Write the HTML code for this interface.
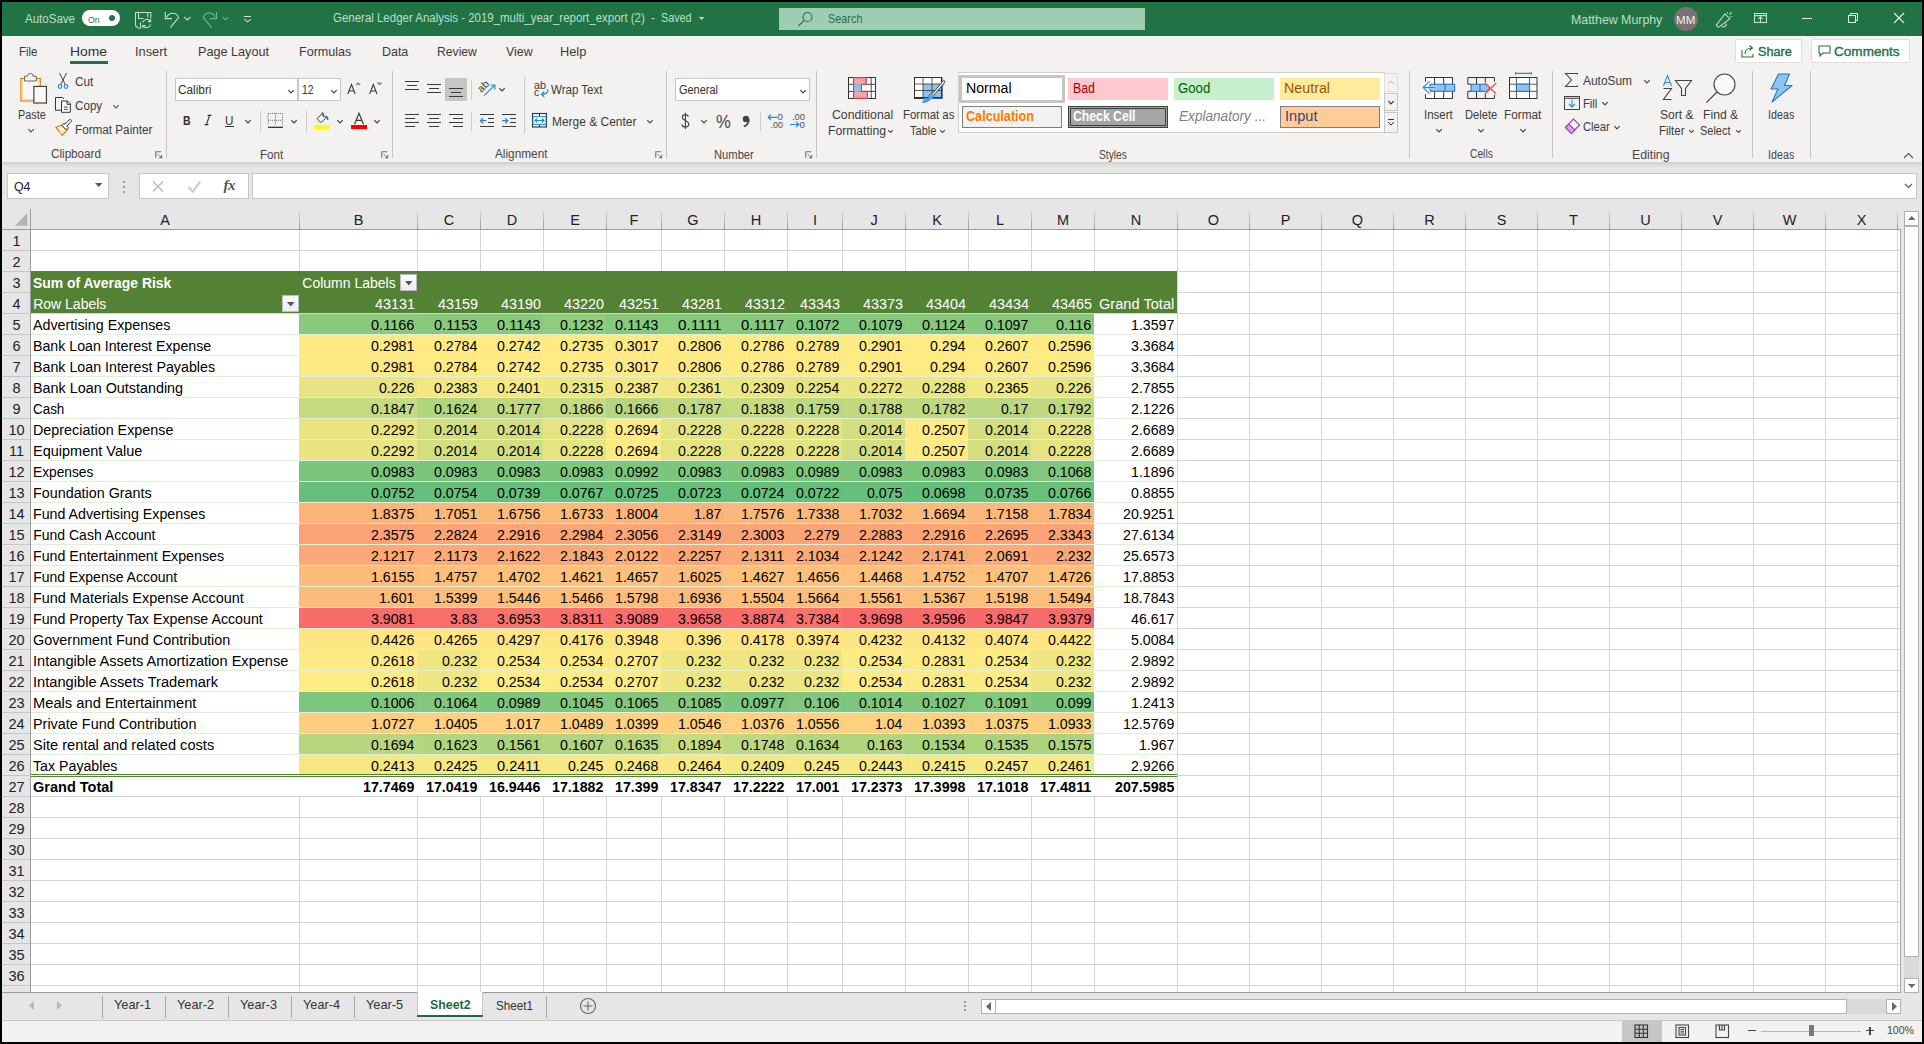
<!DOCTYPE html>
<html><head><meta charset="utf-8"><style>
html,body{margin:0;padding:0;}
body{width:1924px;height:1044px;overflow:hidden;background:#000;position:relative;font-family:"Liberation Sans",sans-serif;}
.r{position:absolute;}
.t{position:absolute;white-space:pre;line-height:1;transform-origin:0 0;font-family:"Liberation Sans",sans-serif;}
svg.r{overflow:visible;}
</style></head><body>
<div class="r" style="left:2px;top:2px;width:1920px;height:34px;background:#217346;"></div><div class="t" style="left:25.00px;top:13.49px;font-size:12.5px;color:#bddfc8;transform:scaleX(0.9224);">AutoSave</div><div class="r" style="left:82px;top:10px;width:38px;height:16px;border-radius:8px;background:#fff"></div><div class="t" style="left:88.00px;top:14.67px;font-size:9.6px;color:#2a7550;transform:scaleX(0.9136);">On</div><div class="r" style="left:108.7px;top:14.6px;width:6.6px;height:6.6px;border-radius:50%;background:#217346"></div><svg class="r" style="left:0;top:0" width="1924" height="36" viewBox="0 0 1924 36" fill="none" stroke-width="1.05">
<g stroke="#c5e0cf">
<path d="M140.5 28V22.5M135.5 12.5H150.8V18.3M135.5 12.5V25.7L138.3 28.2H140.5M138.5 13V18.5H143.5M147.7 13V17.3"/>
<path d="M142.6 22.6A4.3 4.3 0 0 1 150.3 21.2M150.6 18.8V21.6H147.9M150.6 24.3A4.3 4.3 0 0 1 142.9 25.9M142.7 28.3V25.6H145.4"/>
<path d="M165.3 12V18.6H172M166.8 17.4A6.2 6.2 0 0 1 178.6 17.6L170.3 27.6"/>
<path d="M184 16.8L187.3 19.9L190.5 16.8"/>
<path d="M243.9 16.4H251M244.2 19.2L247.6 21.9L251 19.2"/>
<path d="M1716.3 25.4L1724.9 13.8L1729.9 18.7L1718.5 27.3Z"/><path d="M1721.8 25.8A1.9 1.9 0 0 0 1725.6 23.2"/><path d="M1727.4 12.2V13.7M1729.4 14.5L1731.6 12.4M1730.4 16.5H1731.8"/>
<path d="M1754.5 13.5H1766.5V22.5H1754.5ZM1754.5 15.6H1766.5M1760.5 22.5V17M1758.3 19.2L1760.5 17L1762.7 19.2"/>
</g>
<g stroke="#80b597">
<path d="M216.5 12V18.6H209.8M215.2 17.4A6.2 6.2 0 0 0 203.3 17.6L211.7 27.6"/>
<path d="M222.6 17.2L225.4 19.9L228.3 17.2"/>
</g></svg><div class="r" style="left:1802px;top:18px;width:10px;height:1px;background:#e3efe8;"></div><svg class="r" style="left:1847px;top:12px" width="12" height="12" viewBox="0 0 12 12" fill="none" stroke="#e3efe8" stroke-width="1"><rect x="1.5" y="3.5" width="7" height="7"/><path d="M3.5 3.5v-2h7v7h-2"/></svg><svg class="r" style="left:1893px;top:12px" width="12" height="12" viewBox="0 0 12 12" fill="none" stroke="#e3efe8" stroke-width="1.1"><path d="M1 1l10 10M11 1L1 11"/></svg><div class="t" style="left:332.50px;top:12.09px;font-size:12.5px;color:#bddfc8;transform:scaleX(0.9176);">General Ledger Analysis - 2019_multi_year_report_export (2)</div><div class="t" style="left:650.60px;top:12.09px;font-size:12.5px;color:#bddfc8;transform:scaleX(0.9608);">-</div><div class="t" style="left:661.00px;top:12.09px;font-size:12.5px;color:#bddfc8;transform:scaleX(0.8605);">Saved</div><svg class="r" style="left:698.8px;top:17px" width="5.4" height="3" viewBox="0 0 5.4 3"><path d="M0 0h5.4L2.7 3z" fill="#bddfc8"/></svg><div class="r" style="left:779px;top:8px;width:366px;height:22px;background:#9fcdb3;"></div><svg class="r" style="left:797px;top:11px" width="17" height="16" viewBox="0 0 17 16" fill="none" stroke="#2e6f48" stroke-width="1.1"><circle cx="10.5" cy="6" r="4.5"/><path d="M7.3 9.2L1.5 15"/></svg><div class="t" style="left:828.00px;top:13.29px;font-size:12.5px;color:#2e6f48;transform:scaleX(0.8710);">Search</div><div class="t" style="left:1571.40px;top:13.79px;font-size:12.5px;color:#bddfc8;transform:scaleX(0.9881);">Matthew Murphy</div><div class="r" style="left:1674px;top:7px;width:24px;height:24px;border-radius:50%;background:#7a7172"></div><div class="t" style="left:1676.40px;top:14.57px;font-size:11px;color:#f2eef0;transform:scaleX(1.0585);">MM</div><div class="r" style="left:2px;top:36px;width:1920px;height:126px;background:#f3f2f1;"></div><div class="t" style="left:19.00px;top:44.86px;font-size:13px;color:#3b3a39;transform:scaleX(0.8784);">File</div><div class="t" style="left:70.00px;top:44.86px;font-size:13px;color:#323130;transform:scaleX(1.0669);">Home</div><div class="t" style="left:135.00px;top:44.86px;font-size:13px;color:#3b3a39;transform:scaleX(0.9842);">Insert</div><div class="t" style="left:198.00px;top:44.86px;font-size:13px;color:#3b3a39;transform:scaleX(0.9725);">Page Layout</div><div class="t" style="left:299.20px;top:44.86px;font-size:13px;color:#3b3a39;transform:scaleX(0.9672);">Formulas</div><div class="t" style="left:381.50px;top:44.86px;font-size:13px;color:#3b3a39;transform:scaleX(0.9577);">Data</div><div class="t" style="left:437.30px;top:44.86px;font-size:13px;color:#3b3a39;transform:scaleX(0.9361);">Review</div><div class="t" style="left:505.50px;top:44.86px;font-size:13px;color:#3b3a39;transform:scaleX(0.9519);">View</div><div class="t" style="left:560.40px;top:44.86px;font-size:13px;color:#3b3a39;transform:scaleX(0.9836);">Help</div><div class="r" style="left:70px;top:61px;width:38px;height:3px;background:#217346;"></div><div class="r" style="left:1734.5px;top:39px;width:65px;height:22px;background:#fff;border:1px solid #e1dfdd;border-radius:2px"></div><div class="r" style="left:1810.5px;top:39px;width:97px;height:22px;background:#fff;border:1px solid #e1dfdd;border-radius:2px"></div><svg class="r" style="left:1741px;top:44px" width="14" height="14" viewBox="0 0 14 14" fill="none" stroke="#217346" stroke-width="1.1"><path d="M1 6v7h11V10"/><path d="M4 10c0-4 3-6 7-6M8.5 1.5L11.5 4 8.5 6.5"/></svg><div class="t" style="left:1758.20px;top:45.43px;font-size:13.5px;color:#217346;transform:scaleX(0.9382);-webkit-text-stroke:0.4px #217346;">Share</div><svg class="r" style="left:1818px;top:45px" width="13" height="12" viewBox="0 0 13 12" fill="none" stroke="#217346" stroke-width="1.1"><path d="M1 1h11v7H5l-3 3V8H1z"/></svg><div class="t" style="left:1834.40px;top:45.43px;font-size:13.5px;color:#217346;transform:scaleX(1.0051);-webkit-text-stroke:0.4px #217346;">Comments</div><svg class="r" style="left:0;top:0" width="180" height="170" viewBox="0 0 180 170" fill="none">
<rect x="20.9" y="78.5" width="19.4" height="22.5" fill="#fdf3dc" stroke="#e8750c" stroke-width="1.1"/>
<rect x="22.3" y="80" width="16.6" height="19.6" fill="#f7f7f7" stroke="#fbd77e" stroke-width="1"/>
<path d="M24.5 81V76.2H27.6A2.8 2.8 0 0 1 33.2 76.2H36.3V81Z" fill="#f2f2f2" stroke="#666" stroke-width="1"/>
<rect x="33.9" y="86.4" width="12.5" height="16.6" fill="#fafafa" stroke="#333" stroke-width="1.1"/>
</svg><div class="t" style="left:17.50px;top:109.19px;font-size:12.5px;color:#3b3a39;transform:scaleX(0.8666);">Paste</div><svg class="r" style="left:26.5px;top:128px" width="8" height="5" viewBox="0 0 8 5" fill="none" stroke="#555" stroke-width="1.15"><path d="M1.3 1.2l2.7 2.7 2.7-2.7"/></svg><svg class="r" style="left:57px;top:72px" width="12" height="18" viewBox="0 0 12 18" fill="none">
<path d="M2.5 1l6 12M9.5 1l-6 12" stroke="#444" stroke-width="1"/>
<circle cx="3" cy="14.5" r="1.8" stroke="#2f8ad8" stroke-width="1.2"/><circle cx="9" cy="14.5" r="1.8" stroke="#2f8ad8" stroke-width="1.2"/></svg><div class="t" style="left:74.60px;top:76.19px;font-size:12.5px;color:#3b3a39;transform:scaleX(0.9408);">Cut</div><svg class="r" style="left:0;top:0" width="180" height="170" viewBox="0 0 180 170" fill="none" stroke="#333" stroke-width="1">
<path d="M61.5 110.2H55.5V97.5H62.5L64 99"/>
<path d="M61.5 101H67.5L70.3 103.8V112.3H61.5Z" fill="#fff"/><path d="M67 101V104.3H70.3"/><path d="M63.8 107H67.8M63.8 109.3H67.8" stroke-width="0.9"/>
</svg><div class="t" style="left:74.60px;top:99.99px;font-size:12.5px;color:#3b3a39;transform:scaleX(0.9321);">Copy</div><svg class="r" style="left:111.5px;top:104px" width="8" height="5" viewBox="0 0 8 5" fill="none" stroke="#555" stroke-width="1.15"><path d="M1.3 1.2l2.7 2.7 2.7-2.7"/></svg><svg class="r" style="left:0;top:0" width="180" height="170" viewBox="0 0 180 170" fill="none">
<path d="M55.8 127.2L61.5 125.2L66.8 130.5L62.2 135.3Z" fill="#fdf6e8" stroke="#e8750c" stroke-width="1.2" stroke-linejoin="round"/>
<path d="M58.5 132.3L63.5 130.8L62 134.5Z" fill="#fbd77e"/>
<path d="M61.8 125.3L64.2 123.3L68.5 127.6L66.6 130.1Z" fill="#fff" stroke="#333" stroke-width="1"/>
<path d="M64.8 124.4L69.3 119.8A1.2 1.2 0 0 1 71 121.5L66.8 126.2" fill="#fff" stroke="#333" stroke-width="1"/>
</svg><div class="t" style="left:74.60px;top:123.89px;font-size:12.5px;color:#3b3a39;transform:scaleX(0.9363);">Format Painter</div><div class="t" style="left:50.50px;top:148.12px;font-size:12px;color:#484644;transform:scaleX(0.9734);">Clipboard</div><svg class="r" style="left:155px;top:151px" width="8" height="8" viewBox="0 0 8 8"><path d="M0.8 6.8V0.8H6" fill="none" stroke="#707070" stroke-width="1.1"/><path d="M2.8 3.2L5 5.4" stroke="#707070" stroke-width="1"/><path d="M3.6 7.2H7.2V3.6Z" fill="#707070"/></svg><div class="r" style="left:166px;top:71px;width:1px;height:87px;background:#c8c6c4;"></div><div class="r" style="left:175px;top:78px;width:121px;height:21px;background:#fff;border:1px solid #c8c6c4"></div><div class="r" style="left:298px;top:78px;width:41px;height:21px;background:#fff;border:1px solid #c8c6c4"></div><div class="t" style="left:178.40px;top:83.99px;font-size:12.5px;color:#323130;transform:scaleX(0.9456);">Calibri</div><svg class="r" style="left:287px;top:89px" width="8" height="5" viewBox="0 0 8 5" fill="none" stroke="#444" stroke-width="1.15"><path d="M1.3 1.2l2.7 2.7 2.7-2.7"/></svg><div class="t" style="left:301.50px;top:83.99px;font-size:12.5px;color:#323130;transform:scaleX(0.8271);">12</div><svg class="r" style="left:330px;top:89px" width="8" height="5" viewBox="0 0 8 5" fill="none" stroke="#444" stroke-width="1.15"><path d="M1.3 1.2l2.7 2.7 2.7-2.7"/></svg><svg class="r" style="left:0;top:0" width="400" height="170" viewBox="0 0 400 170" fill="none">
<path d="M347.8 94L351.5 84.6L355.2 94M349 91H354" stroke="#3a3a3a" stroke-width="1.1"/><path d="M356.2 85L358.1 83L360 85" stroke="#1e88d8" stroke-width="1.1"/>
<path d="M369.6 94L373.3 84.6L377 94M370.8 91H375.8" stroke="#3a3a3a" stroke-width="1.1"/><path d="M377.5 82.5L379.5 84.5L381.5 82.5" stroke="#1e88d8" stroke-width="1.1"/>
<path d="M207.6 115.4H211.4M204.6 124.6H208.4M209.6 115.4L206.4 124.6" stroke="#333" stroke-width="1.1"/>
<path d="M268.2 113.5H282.5V125.5M268.2 113.5V125.5M275.5 113.5V125.5M268.2 120.3H282.5" stroke="#555" stroke-width="0.9" stroke-dasharray="0.9 1.1"/>
<path d="M268 127.3H283" stroke="#222" stroke-width="1.2"/>
<path d="M317 118.7L322 113.7L326 117.7L321 122.7Z" stroke="#3a3a3a" stroke-width="1"/><path d="M322 113.7C321.5 112.5 323.2 112 323.2 113.3V117" stroke="#3a3a3a" stroke-width="1"/>
<path d="M325.2 116.3C326.8 116.5 327.8 117.6 327.7 120" stroke="#1e6fc0" stroke-width="1.5"/>
<path d="M354.6 124.2L359 113.2L363.5 124.2M356.2 120.3H362" stroke="#3a3a3a" stroke-width="1.15"/>
</svg><div class="t" style="left:182.60px;top:114.39px;font-size:13.2px;color:#333;font-weight:bold;transform:scaleX(0.7972);">B</div><div class="t" style="left:225.30px;top:114.79px;font-size:12.5px;color:#333;transform:scaleX(0.9305);">U</div><div class="r" style="left:225px;top:126px;width:9px;height:1.1px;background:#333;"></div><svg class="r" style="left:243.5px;top:118.8px" width="8" height="5" viewBox="0 0 8 5" fill="none" stroke="#3a3a3a" stroke-width="1.15"><path d="M1.3 1.2l2.7 2.7 2.7-2.7"/></svg><div class="r" style="left:260px;top:111px;width:1px;height:21px;background:#d0cecc;"></div><svg class="r" style="left:289.5px;top:118.8px" width="8" height="5" viewBox="0 0 8 5" fill="none" stroke="#3a3a3a" stroke-width="1.15"><path d="M1.3 1.2l2.7 2.7 2.7-2.7"/></svg><div class="r" style="left:306px;top:111px;width:1px;height:21px;background:#d0cecc;"></div><div class="r" style="left:314px;top:125.3px;width:15.7px;height:3.6px;background:#ffff00;"></div><svg class="r" style="left:335.5px;top:118.8px" width="8" height="5" viewBox="0 0 8 5" fill="none" stroke="#3a3a3a" stroke-width="1.15"><path d="M1.3 1.2l2.7 2.7 2.7-2.7"/></svg><div class="r" style="left:351px;top:125.3px;width:16px;height:3.6px;background:#ff0000;"></div><svg class="r" style="left:372.5px;top:118.8px" width="8" height="5" viewBox="0 0 8 5" fill="none" stroke="#3a3a3a" stroke-width="1.15"><path d="M1.3 1.2l2.7 2.7 2.7-2.7"/></svg><div class="t" style="left:259.60px;top:148.52px;font-size:12px;color:#484644;transform:scaleX(0.9662);">Font</div><svg class="r" style="left:381px;top:151px" width="8" height="8" viewBox="0 0 8 8"><path d="M0.8 6.8V0.8H6" fill="none" stroke="#707070" stroke-width="1.1"/><path d="M2.8 3.2L5 5.4" stroke="#707070" stroke-width="1"/><path d="M3.6 7.2H7.2V3.6Z" fill="#707070"/></svg><div class="r" style="left:392px;top:71px;width:1px;height:87px;background:#c8c6c4;"></div><div class="r" style="left:405px;top:80.8px;width:14px;height:1.25px;background:#3a3a3a;"></div><div class="r" style="left:407.2px;top:84.9px;width:9.6px;height:1.25px;background:#3a3a3a;"></div><div class="r" style="left:405px;top:88.9px;width:14px;height:1.25px;background:#3a3a3a;"></div><div class="r" style="left:427px;top:83.8px;width:14px;height:1.25px;background:#3a3a3a;"></div><div class="r" style="left:429.2px;top:87.8px;width:9.8px;height:1.25px;background:#3a3a3a;"></div><div class="r" style="left:427px;top:91.8px;width:14px;height:1.25px;background:#3a3a3a;"></div><div class="r" style="left:445px;top:78px;width:22px;height:23px;background:#c8c6c4;"></div><div class="r" style="left:449px;top:87.8px;width:14px;height:1.25px;background:#3a3a3a;"></div><div class="r" style="left:451.2px;top:91.8px;width:9.8px;height:1.25px;background:#3a3a3a;"></div><div class="r" style="left:449px;top:95.8px;width:14px;height:1.25px;background:#3a3a3a;"></div><div class="r" style="left:471px;top:79.5px;width:1px;height:20.5px;background:#d0cecc;"></div><svg class="r" style="left:0;top:0" width="700" height="170" viewBox="0 0 700 170" fill="none">
<text x="0" y="0" font-size="10.5" font-family="Liberation Sans" fill="#3a3a3a" transform="translate(481.5 93) rotate(-45)">ab</text>
<path d="M484.2 95.6L494.6 85.2M490.2 85H494.8V89.6" stroke="#1e88d8" stroke-width="1.15"/>
<path d="M480.5 120.7H486.3M483 118.2L480.5 120.7L483 123.2" stroke="#1e88d8" stroke-width="1.3"/>
<path d="M502 120.7H507.8M505.3 118.2L507.8 120.7L505.3 123.2" stroke="#1e88d8" stroke-width="1.3"/>
</svg><svg class="r" style="left:498.3px;top:86.5px" width="8" height="5" viewBox="0 0 8 5" fill="none" stroke="#3a3a3a" stroke-width="1.15"><path d="M1.3 1.2l2.7 2.7 2.7-2.7"/></svg><div class="r" style="left:524px;top:76.5px;width:1px;height:57.5px;background:#d0cecc;"></div><div class="r" style="left:405px;top:113.8px;width:14px;height:1.25px;background:#3a3a3a;"></div><div class="r" style="left:405px;top:117.83px;width:10px;height:1.25px;background:#3a3a3a;"></div><div class="r" style="left:405px;top:121.86px;width:14px;height:1.25px;background:#3a3a3a;"></div><div class="r" style="left:405px;top:125.89px;width:10px;height:1.25px;background:#3a3a3a;"></div><div class="r" style="left:427px;top:113.8px;width:14px;height:1.25px;background:#3a3a3a;"></div><div class="r" style="left:429.2px;top:117.83px;width:9.8px;height:1.25px;background:#3a3a3a;"></div><div class="r" style="left:427px;top:121.86px;width:14px;height:1.25px;background:#3a3a3a;"></div><div class="r" style="left:429.2px;top:125.89px;width:9.8px;height:1.25px;background:#3a3a3a;"></div><div class="r" style="left:449px;top:113.8px;width:14px;height:1.25px;background:#3a3a3a;"></div><div class="r" style="left:453px;top:117.83px;width:10px;height:1.25px;background:#3a3a3a;"></div><div class="r" style="left:449px;top:121.86px;width:14px;height:1.25px;background:#3a3a3a;"></div><div class="r" style="left:453px;top:125.89px;width:10px;height:1.25px;background:#3a3a3a;"></div><div class="r" style="left:471px;top:111.5px;width:1px;height:19.5px;background:#d0cecc;"></div><div class="r" style="left:480.2px;top:113.8px;width:13.8px;height:1.25px;background:#3a3a3a;"></div><div class="r" style="left:488.3px;top:117.8px;width:5.7px;height:1.25px;background:#3a3a3a;"></div><div class="r" style="left:488.3px;top:121.9px;width:5.7px;height:1.25px;background:#3a3a3a;"></div><div class="r" style="left:480.2px;top:125.9px;width:13.8px;height:1.25px;background:#3a3a3a;"></div><div class="r" style="left:502px;top:113.8px;width:14px;height:1.25px;background:#3a3a3a;"></div><div class="r" style="left:510.1px;top:117.8px;width:5.9px;height:1.25px;background:#3a3a3a;"></div><div class="r" style="left:510.1px;top:121.9px;width:5.9px;height:1.25px;background:#3a3a3a;"></div><div class="r" style="left:502px;top:125.9px;width:14px;height:1.25px;background:#3a3a3a;"></div><svg class="r" style="left:0;top:0" width="700" height="170" viewBox="0 0 700 170" fill="none">
<text x="534" y="88.6" font-size="10.5" font-family="Liberation Sans" fill="#3a3a3a" textLength="12" lengthAdjust="spacingAndGlyphs">ab</text>
<text x="534" y="95.8" font-size="10.5" font-family="Liberation Sans" fill="#3a3a3a">c</text>
<path d="M547.6 89.2C548.8 92 546.5 94.2 541.8 94.2M544.2 91.7L541.5 94.2L544.2 96.7" stroke="#1e88d8" stroke-width="1.2"/>
<rect x="532.5" y="113.5" width="14" height="13.5" stroke="#333" stroke-width="1.1"/>
<path d="M539.5 113.5V116.5M539.5 124.5V127" stroke="#333" stroke-width="1"/>
<rect x="533" y="116.6" width="13" height="7.8" fill="#fff" stroke="#1e88d8" stroke-width="1"/>
<path d="M535 120.5H544M537.2 118.3L535 120.5L537.2 122.7M541.8 118.3L544 120.5L541.8 122.7" stroke="#1e88d8" stroke-width="1.15"/>
</svg><div class="t" style="left:551.30px;top:83.69px;font-size:12.5px;color:#3b3a39;transform:scaleX(0.9227);">Wrap Text</div><div class="t" style="left:551.60px;top:115.69px;font-size:12.5px;color:#3b3a39;transform:scaleX(0.9565);">Merge &amp; Center</div><svg class="r" style="left:645.5px;top:119px" width="8" height="5" viewBox="0 0 8 5" fill="none" stroke="#444" stroke-width="1.15"><path d="M1.3 1.2l2.7 2.7 2.7-2.7"/></svg><div class="t" style="left:495.00px;top:148.12px;font-size:12px;color:#484644;transform:scaleX(0.9838);">Alignment</div><svg class="r" style="left:655px;top:151px" width="8" height="8" viewBox="0 0 8 8"><path d="M0.8 6.8V0.8H6" fill="none" stroke="#707070" stroke-width="1.1"/><path d="M2.8 3.2L5 5.4" stroke="#707070" stroke-width="1"/><path d="M3.6 7.2H7.2V3.6Z" fill="#707070"/></svg><div class="r" style="left:666px;top:71px;width:1px;height:87px;background:#c8c6c4;"></div><div class="r" style="left:675px;top:78px;width:133px;height:21px;background:#fff;border:1px solid #c8c6c4"></div><div class="t" style="left:678.70px;top:84.19px;font-size:12.5px;color:#323130;transform:scaleX(0.8770);">General</div><svg class="r" style="left:798.5px;top:89px" width="8" height="5" viewBox="0 0 8 5" fill="none" stroke="#444" stroke-width="1.15"><path d="M1.3 1.2l2.7 2.7 2.7-2.7"/></svg><svg class="r" style="left:0;top:0" width="700" height="140" viewBox="0 0 700 140" fill="none" stroke="#404040" stroke-width="1.1"><path d="M688.4 116.8C688 115.3 686.8 114.6 685.4 114.6C683.5 114.6 682.3 115.8 682.3 117.4C682.3 120.8 688.8 120.2 688.8 124.1C688.8 125.9 687.4 127.1 685.4 127.1C683.4 127.1 682.2 126 681.9 124.3M685.4 112.7V129"/></svg><svg class="r" style="left:699.5px;top:119px" width="8" height="5" viewBox="0 0 8 5" fill="none" stroke="#444" stroke-width="1.15"><path d="M1.3 1.2l2.7 2.7 2.7-2.7"/></svg><div class="t" style="left:715.60px;top:113.05px;font-size:18.5px;color:#444;transform:scaleX(0.8997);">%</div><svg class="r" style="left:741px;top:113px" width="10" height="16" viewBox="0 0 10 16"><circle cx="5" cy="6" r="3.2" fill="#444"/><path d="M7.8 6.5c0 4-2 6-5 7" stroke="#444" stroke-width="1.8" fill="none"/></svg><div class="r" style="left:760px;top:112px;width:1px;height:19px;background:#d0cecc;"></div><svg class="r" style="left:0;top:0" width="820" height="170" viewBox="0 0 820 170" fill="none">
<path d="M777.2 117.3H768.3M771 114.6L768.3 117.3L771 120" stroke="#1e88d8" stroke-width="1.2"/>
<text x="777.6" y="119.8" font-size="9.6" font-family="Liberation Sans" fill="#505050" textLength="5.4" lengthAdjust="spacingAndGlyphs">0</text>
<text x="770.5" y="127.9" font-size="9.6" font-family="Liberation Sans" fill="#505050" textLength="12.6" lengthAdjust="spacingAndGlyphs">.00</text>
<text x="792" y="119.8" font-size="9.6" font-family="Liberation Sans" fill="#505050" textLength="13" lengthAdjust="spacingAndGlyphs">.00</text>
<path d="M790 124.5H798.8M796.1 121.8L798.8 124.5L796.1 127.2" stroke="#1e88d8" stroke-width="1.2"/>
<text x="799.6" y="127.9" font-size="9.6" font-family="Liberation Sans" fill="#505050" textLength="5.4" lengthAdjust="spacingAndGlyphs">0</text>
</svg><div class="t" style="left:713.80px;top:148.52px;font-size:12px;color:#484644;transform:scaleX(0.9325);">Number</div><svg class="r" style="left:805px;top:151px" width="8" height="8" viewBox="0 0 8 8"><path d="M0.8 6.8V0.8H6" fill="none" stroke="#707070" stroke-width="1.1"/><path d="M2.8 3.2L5 5.4" stroke="#707070" stroke-width="1"/><path d="M3.6 7.2H7.2V3.6Z" fill="#707070"/></svg><div class="r" style="left:816px;top:71px;width:1px;height:87px;background:#c8c6c4;"></div><svg class="r" style="left:0;top:0" width="960" height="170" viewBox="0 0 960 170" fill="none">
<rect x="848.5" y="77.5" width="27" height="21" fill="#fff" stroke="#333" stroke-width="1"/>
<path d="M853.6 77.5V98.5M871.2 77.5V98.5M866 77.5V84.3M866 91.4V98.5M848.5 84.3H875.5M848.5 91.4H875.5" stroke="#333" stroke-width="0.9"/>
<rect x="853.6" y="77.5" width="12.4" height="6.8" fill="#f4a3ab"/><rect x="853.6" y="84.3" width="7.8" height="7.1" fill="#8fc3ee"/><rect x="853.6" y="91.4" width="13.9" height="7.1" fill="#f4a3ab"/>
<path d="M853.6 77.8H866V84.3H861.4V91.4H867.5V98.2H853.6Z" stroke="#e03c3c" stroke-width="1.1"/>
<rect x="914.5" y="77.5" width="27.5" height="21" fill="#fff" stroke="#333" stroke-width="1"/>
<rect x="923.7" y="84.3" width="18.3" height="14.2" fill="#8fc3ee"/>
<path d="M923.7 77.5V98.5M933 77.5V98.5M914.5 84.3H942M914.5 91.4H942" stroke="#333" stroke-width="0.9"/>
<path d="M923.7 84.3H942V98.5H923.7Z" stroke="#1e6fc0" stroke-width="1"/>
<path d="M930.2 95.5L941.8 83.2C942.8 82.2 944.5 83.5 943.6 84.6L932.3 97.2Z" fill="#fff" stroke="#555" stroke-width="0.9"/>
<path d="M921.5 103C923.5 101.5 924 97 927.5 95.8L931.2 97.6C930.8 101.5 926 103.5 921.5 103Z" fill="#4a9fe6"/>
</svg><div class="t" style="left:831.60px;top:109.09px;font-size:12.5px;color:#3b3a39;transform:scaleX(0.9785);">Conditional</div><div class="t" style="left:827.70px;top:124.69px;font-size:12.5px;color:#3b3a39;transform:scaleX(0.9708);">Formatting</div><svg class="r" style="left:887px;top:128.5px" width="7" height="4.5" viewBox="0 0 8 5" fill="none" stroke="#444" stroke-width="1.15"><path d="M1.3 1.2l2.7 2.7 2.7-2.7"/></svg><svg class="r" style="left:913px;top:76px" width="33" height="25" viewBox="0 0 33 25">
<rect x="1.5" y="1.5" width="27" height="20" fill="#fff" stroke="#333" stroke-width="1"/>
<rect x="10" y="8" width="18" height="13" fill="#8fc3ee"/>
<path d="M10 1.5v20M19 1.5v20M1.5 8h27M1.5 14.5h27" stroke="#333" stroke-width="0.8"/>
<path d="M16 21c0-3 2-4 4-4l10-12c1-1 2.5 0 2 1L21 19c0 2-2 4-5 4z" fill="#fff" stroke="#444" stroke-width="1"/><path d="M15 23c1-3 2-5 5-5l1 1c0 3-3 5-6 4z" fill="#5aa6e6"/></svg><div class="t" style="left:902.60px;top:109.09px;font-size:12.5px;color:#3b3a39;transform:scaleX(0.9136);">Format as</div><div class="t" style="left:909.60px;top:124.69px;font-size:12.5px;color:#3b3a39;transform:scaleX(0.8868);">Table</div><svg class="r" style="left:939px;top:128.5px" width="7" height="4.5" viewBox="0 0 8 5" fill="none" stroke="#444" stroke-width="1.15"><path d="M1.3 1.2l2.7 2.7 2.7-2.7"/></svg><div class="r" style="left:958px;top:72px;width:440px;height:61px;background:#fff;border:1px solid #d2d0ce;box-sizing:border-box"></div><div class="r" style="left:959px;top:75px;width:106px;height:28px;border:3px solid #c8c6c4;box-sizing:border-box;background:#fff"></div><div class="t" style="left:966.40px;top:80.80px;font-size:14px;color:#000;transform:scaleX(1.0107);">Normal</div><div class="r" style="left:1068px;top:78px;width:100px;height:22px;background:#ffc7ce;"></div><div class="t" style="left:1072.50px;top:80.80px;font-size:14px;color:#9c0006;transform:scaleX(0.8831);">Bad</div><div class="r" style="left:1174px;top:78px;width:100px;height:22px;background:#c6efce;"></div><div class="t" style="left:1178.00px;top:80.80px;font-size:14px;color:#006100;transform:scaleX(0.9431);">Good</div><div class="r" style="left:1280px;top:78px;width:100px;height:22px;background:#ffeb9c;"></div><div class="t" style="left:1284.30px;top:80.80px;font-size:14px;color:#9c5700;transform:scaleX(1.0192);">Neutral</div><div class="r" style="left:962px;top:106px;width:100px;height:22px;background:#f2f2f2;border:1px solid #7f7f7f;box-sizing:border-box"></div><div class="t" style="left:966.00px;top:108.90px;font-size:14px;color:#fa7d00;font-weight:bold;transform:scaleX(0.9012);">Calculation</div><div class="r" style="left:1068px;top:106px;width:100px;height:22px;background:#a5a5a5;border:3px double #3f3f3f;box-sizing:border-box"></div><div class="t" style="left:1072.50px;top:108.90px;font-size:14px;color:#fff;font-weight:bold;transform:scaleX(0.8731);">Check Cell</div><div class="t" style="left:1178.80px;top:108.90px;font-size:14px;color:#7f7f7f;font-style:italic;transform:scaleX(0.9722);">Explanatory ...</div><div class="r" style="left:1280px;top:106px;width:100px;height:22px;background:#ffcc99;border:1px solid #7f7f7f;box-sizing:border-box"></div><div class="t" style="left:1284.50px;top:108.90px;font-size:14px;color:#3f3f76;transform:scaleX(1.0437);">Input</div><div class="r" style="left:1384px;top:72px;width:14px;height:61px;background:#f3f2f1;border-left:1px solid #d2d0ce"></div><div class="r" style="left:1384px;top:73px;width:14px;height:19px;border:1px solid #e1dfdd;box-sizing:border-box;background:#f3f2f1"></div><div class="r" style="left:1384px;top:93px;width:14px;height:18px;border:1px solid #c8c6c4;box-sizing:border-box;background:#f3f2f1"></div><div class="r" style="left:1384px;top:112px;width:14px;height:21px;border:1px solid #c8c6c4;box-sizing:border-box;background:#f3f2f1"></div><svg class="r" style="left:1387px;top:80px" width="8" height="5" viewBox="0 0 8 5" fill="none" stroke="#bbb" stroke-width="1"><path d="M1 4l3-3 3 3"/></svg><svg class="r" style="left:1387px;top:100px" width="8" height="5" viewBox="0 0 8 5" fill="none" stroke="#333" stroke-width="1.15"><path d="M1.3 1.2l2.7 2.7 2.7-2.7"/></svg><svg class="r" style="left:1387px;top:118px" width="8" height="9" viewBox="0 0 8 9" fill="none" stroke="#333" stroke-width="1"><path d="M1 1.5h6M1 4l3 3 3-3"/></svg><div class="t" style="left:1098.50px;top:148.52px;font-size:12px;color:#484644;transform:scaleX(0.8507);">Styles</div><div class="r" style="left:1409px;top:71px;width:1px;height:87px;background:#c8c6c4;"></div><svg class="r" style="left:0;top:0" width="1600" height="170" viewBox="0 0 1600 170" fill="none">
<path d="M1425.5 81.5V77.5H1452.5V84.2M1425.5 94V98.5H1452.5V91.3M1434.6 77.5V84.2M1443.7 77.5V84.2M1434.6 91.3V98.5M1443.7 91.3V98.5" stroke="#333" stroke-width="1" fill="#fff"/>
<rect x="1425.5" y="77.5" width="27" height="6.7" fill="#fff"/><rect x="1425.5" y="91.3" width="27" height="7.2" fill="#fff"/>
<path d="M1425.5 77.5H1452.5V84.2M1425.5 77.5V81.5M1425.5 94.2V98.5H1452.5V91.3M1434.6 77.5V84.2M1443.7 77.5V84.2M1434.6 91.3V98.5M1443.7 91.3V98.5" stroke="#333" stroke-width="1"/>
<path d="M1430 84.2H1454.8V91.3H1430Z" fill="#8fc3ee" stroke="#1e6fc0" stroke-width="1"/><path d="M1445 84.2V91.3" stroke="#1e6fc0" stroke-width="1"/>
<rect x="1424" y="86.7" width="12" height="1.8" fill="#fff"/>
<path d="M1429.5 81.2L1423.2 87.6L1429.5 93.8M1423.5 87.6H1435.5" stroke="#2a8ad8" stroke-width="1.1"/>
<path d="M1467.8 81.5V77.5H1494.5V81.5M1467.8 84.2V81.5M1467.8 84.2H1471M1467.8 91.3H1471M1467.8 91.3V98.5H1494.5V95M1476.5 77.5V84.2M1485.3 77.5V82.5M1476.5 91.3V98.5M1485.3 93V98.5" stroke="#333" stroke-width="1"/>
<path d="M1471.1 84.2H1486.5L1490 87.75L1486.5 91.3H1471.1Z" fill="#8fc3ee" stroke="#1e6fc0" stroke-width="1"/><path d="M1480 84.2V91.3" stroke="#1e6fc0" stroke-width="1"/>
<path d="M1485 83L1496.2 94M1496.2 83L1485 94" stroke="#f04848" stroke-width="1.1"/>
<rect x="1509.5" y="77.5" width="27.5" height="21" fill="#fff" stroke="#333" stroke-width="1"/>
<path d="M1516.4 77.5V98.5M1529.5 77.5V98.5M1509.5 84.2H1537M1509.5 91.3H1537" stroke="#444" stroke-width="0.9"/>
<path d="M1516.4 84.2H1529.5V91.3H1516.4Z" fill="#8fc3ee" stroke="#1e6fc0" stroke-width="1"/>
<path d="M1515.6 73.4H1531.2M1515.6 72V74.8M1531.2 72V74.8" stroke="#2a8ad8" stroke-width="1.1"/>
</svg><div class="t" style="left:1424.00px;top:108.99px;font-size:12.5px;color:#3b3a39;transform:scaleX(0.9180);">Insert</div><svg class="r" style="left:1434.5px;top:128px" width="8" height="5" viewBox="0 0 8 5" fill="none" stroke="#444" stroke-width="1.15"><path d="M1.3 1.2l2.7 2.7 2.7-2.7"/></svg><div class="t" style="left:1464.60px;top:108.99px;font-size:12.5px;color:#3b3a39;transform:scaleX(0.8911);">Delete</div><svg class="r" style="left:1476.5px;top:128px" width="8" height="5" viewBox="0 0 8 5" fill="none" stroke="#444" stroke-width="1.15"><path d="M1.3 1.2l2.7 2.7 2.7-2.7"/></svg><div class="t" style="left:1504.40px;top:108.99px;font-size:12.5px;color:#3b3a39;transform:scaleX(0.9447);">Format</div><svg class="r" style="left:1518.5px;top:128px" width="8" height="5" viewBox="0 0 8 5" fill="none" stroke="#444" stroke-width="1.15"><path d="M1.3 1.2l2.7 2.7 2.7-2.7"/></svg><div class="t" style="left:1469.70px;top:147.72px;font-size:12px;color:#484644;transform:scaleX(0.8548);">Cells</div><div class="r" style="left:1552px;top:71px;width:1px;height:87px;background:#c8c6c4;"></div><svg class="r" style="left:1564px;top:72px" width="16" height="16" viewBox="0 0 16 16" fill="none" stroke="#444" stroke-width="1.1"><path d="M13.5 2.5V1.5h-12l6 6.5-6 6.5h12v-1"/></svg><div class="t" style="left:1583.30px;top:75.19px;font-size:12.5px;color:#3b3a39;transform:scaleX(0.9530);">AutoSum</div><svg class="r" style="left:1642.5px;top:79px" width="8" height="5" viewBox="0 0 8 5" fill="none" stroke="#444" stroke-width="1.15"><path d="M1.3 1.2l2.7 2.7 2.7-2.7"/></svg><svg class="r" style="left:1563px;top:95px" width="18" height="16" viewBox="0 0 18 16" fill="none"><rect x="1.5" y="1.5" width="15" height="13" stroke="#444" stroke-width="1"/><path d="M1.5 3.3h15" stroke="#333" stroke-width="1"/><path d="M9 5v7M6 9l3 3 3-3" stroke="#2f8ad8" stroke-width="1.1"/></svg><div class="t" style="left:1583.30px;top:97.69px;font-size:12.5px;color:#3b3a39;transform:scaleX(0.8956);">Fill</div><svg class="r" style="left:1600.5px;top:101px" width="8" height="5" viewBox="0 0 8 5" fill="none" stroke="#444" stroke-width="1.15"><path d="M1.3 1.2l2.7 2.7 2.7-2.7"/></svg><svg class="r" style="left:1563.5px;top:117px" width="17" height="17" viewBox="0 0 17 17"><path d="M1.5 10.5l8-8.5 6 6-8 8.5z" fill="#fff" stroke="#a53fbf" stroke-width="1.2"/><path d="M1.5 10.5l3.5-3.5 6 6-3.5 3.5z" fill="#d6a6e3" stroke="#a53fbf" stroke-width="1.2"/></svg><div class="t" style="left:1583.30px;top:120.89px;font-size:12.5px;color:#3b3a39;transform:scaleX(0.8938);">Clear</div><svg class="r" style="left:1612.5px;top:125px" width="8" height="5" viewBox="0 0 8 5" fill="none" stroke="#444" stroke-width="1.15"><path d="M1.3 1.2l2.7 2.7 2.7-2.7"/></svg><svg class="r" style="left:1662px;top:74px" width="31" height="28" viewBox="0 0 31 28" fill="none">
<path d="M1.5 12L5.5 1.5 9.5 12M2.8 8.5h5.4" stroke="#2f8ad8" stroke-width="1.1"/>
<path d="M1.5 14.5h8l-8 11h8" stroke="#444" stroke-width="1.1"/>
<path d="M13.5 6.5h16l-6 8v7h-4v-7z" stroke="#444" stroke-width="1.1"/></svg><div class="t" style="left:1660.00px;top:108.89px;font-size:12.5px;color:#3b3a39;transform:scaleX(0.9615);">Sort &amp;</div><div class="t" style="left:1658.50px;top:124.59px;font-size:12.5px;color:#3b3a39;transform:scaleX(0.9180);">Filter</div><svg class="r" style="left:1688px;top:128.5px" width="7" height="4.5" viewBox="0 0 8 5" fill="none" stroke="#444" stroke-width="1.15"><path d="M1.3 1.2l2.7 2.7 2.7-2.7"/></svg><svg class="r" style="left:1705px;top:72px" width="32" height="32" viewBox="0 0 32 32" fill="none" stroke="#444" stroke-width="1.1">
<circle cx="19.5" cy="12.5" r="10.5" fill="#fafafa"/><path d="M12 20L1.5 30.5"/></svg><div class="t" style="left:1703.40px;top:108.89px;font-size:12.5px;color:#3b3a39;transform:scaleX(0.9743);">Find &amp;</div><div class="t" style="left:1700.00px;top:124.59px;font-size:12.5px;color:#3b3a39;transform:scaleX(0.8779);">Select</div><svg class="r" style="left:1734.5px;top:128.5px" width="7" height="4.5" viewBox="0 0 8 5" fill="none" stroke="#444" stroke-width="1.15"><path d="M1.3 1.2l2.7 2.7 2.7-2.7"/></svg><div class="t" style="left:1632.00px;top:148.52px;font-size:12px;color:#484644;transform:scaleX(1.0220);">Editing</div><div class="r" style="left:1752px;top:71px;width:1px;height:87px;background:#c8c6c4;"></div><svg class="r" style="left:1770px;top:73px" width="24" height="30" viewBox="0 0 24 30"><path d="M8.5 1h11l-5 11.5h7.5L2 29l6-13H1z" fill="#8fc3ee" stroke="#1e7acb" stroke-width="1.1" stroke-linejoin="round"/></svg><div class="t" style="left:1768.20px;top:108.89px;font-size:12.5px;color:#3b3a39;transform:scaleX(0.8601);">Ideas</div><div class="t" style="left:1768.20px;top:148.52px;font-size:12px;color:#484644;transform:scaleX(0.8959);">Ideas</div><div class="r" style="left:1810px;top:71px;width:1px;height:87px;background:#c8c6c4;"></div><svg class="r" style="left:1903px;top:152px" width="11" height="7" viewBox="0 0 11 7" fill="none" stroke="#555" stroke-width="1.1"><path d="M1 6l4.5-4.5L10 6"/></svg><div class="r" style="left:2px;top:162px;width:1920px;height:47px;background:#e6e6e6;"></div><div class="r" style="left:2px;top:162px;width:1920px;height:5px;background:linear-gradient(#d2d0ce,#e6e6e6)"></div><div class="r" style="left:7px;top:173px;width:102px;height:26px;background:#fff;border:1px solid #c8c6c4;box-sizing:border-box"></div><div class="t" style="left:14.00px;top:179.86px;font-size:13px;color:#222;transform:scaleX(0.9515);">Q4</div><svg class="r" style="left:94.6px;top:183.2px" width="7.4" height="4" viewBox="0 0 7.4 4"><path d="M0 0h7.4L3.7 4z" fill="#555"/></svg><div class="r" style="left:123px;top:181px;width:2px;height:2px;background:#9a9a9a;"></div><div class="r" style="left:123px;top:186px;width:2px;height:2px;background:#9a9a9a;"></div><div class="r" style="left:123px;top:191px;width:2px;height:2px;background:#9a9a9a;"></div><div class="r" style="left:139px;top:173px;width:110px;height:26px;background:#fff;border:1px solid #c8c6c4;box-sizing:border-box"></div><svg class="r" style="left:0;top:0" width="260" height="200" viewBox="0 0 260 200" fill="none"><path d="M153 181.5L163 191.5M163 181.5L153 191.5" stroke="#bdbdbd" stroke-width="1.5"/><path d="M188.5 187L192.8 191.5L200.3 181.5" stroke="#cdcdcd" stroke-width="2.2"/></svg><div class="t" style="left:223.5px;top:177.6px;font-size:15px;color:#555;font-weight:bold;font-family:'Liberation Serif',serif;font-style:italic;letter-spacing:-0.6px">fx</div><div class="r" style="left:252px;top:173px;width:1665px;height:26px;background:#fff;border:1px solid #c8c6c4;box-sizing:border-box"></div><svg class="r" style="left:1904px;top:183px" width="9" height="6" viewBox="0 0 9 6" fill="none" stroke="#666" stroke-width="1.4"><path d="M1 1l3.5 3.5L8 1"/></svg><div class="r" style="left:31px;top:230px;width:1870px;height:762px;background:#fff;"></div><div class="r" style="left:2px;top:209px;width:1902px;height:21px;background:#e6e6e6;"></div><div class="r" style="left:2px;top:230px;width:28px;height:762px;background:#e6e6e6;"></div><div class="r" style="left:299px;top:230px;width:1px;height:762px;background:#d4d4d4;"></div><div class="r" style="left:417px;top:230px;width:1px;height:762px;background:#d4d4d4;"></div><div class="r" style="left:480px;top:230px;width:1px;height:762px;background:#d4d4d4;"></div><div class="r" style="left:543px;top:230px;width:1px;height:762px;background:#d4d4d4;"></div><div class="r" style="left:606px;top:230px;width:1px;height:762px;background:#d4d4d4;"></div><div class="r" style="left:661px;top:230px;width:1px;height:762px;background:#d4d4d4;"></div><div class="r" style="left:724px;top:230px;width:1px;height:762px;background:#d4d4d4;"></div><div class="r" style="left:787px;top:230px;width:1px;height:762px;background:#d4d4d4;"></div><div class="r" style="left:842px;top:230px;width:1px;height:762px;background:#d4d4d4;"></div><div class="r" style="left:905px;top:230px;width:1px;height:762px;background:#d4d4d4;"></div><div class="r" style="left:968px;top:230px;width:1px;height:762px;background:#d4d4d4;"></div><div class="r" style="left:1031px;top:230px;width:1px;height:762px;background:#d4d4d4;"></div><div class="r" style="left:1094px;top:230px;width:1px;height:762px;background:#d4d4d4;"></div><div class="r" style="left:1177px;top:230px;width:1px;height:762px;background:#d4d4d4;"></div><div class="r" style="left:1249px;top:230px;width:1px;height:762px;background:#d4d4d4;"></div><div class="r" style="left:1321px;top:230px;width:1px;height:762px;background:#d4d4d4;"></div><div class="r" style="left:1393px;top:230px;width:1px;height:762px;background:#d4d4d4;"></div><div class="r" style="left:1465px;top:230px;width:1px;height:762px;background:#d4d4d4;"></div><div class="r" style="left:1537px;top:230px;width:1px;height:762px;background:#d4d4d4;"></div><div class="r" style="left:1609px;top:230px;width:1px;height:762px;background:#d4d4d4;"></div><div class="r" style="left:1681px;top:230px;width:1px;height:762px;background:#d4d4d4;"></div><div class="r" style="left:1753px;top:230px;width:1px;height:762px;background:#d4d4d4;"></div><div class="r" style="left:1825px;top:230px;width:1px;height:762px;background:#d4d4d4;"></div><div class="r" style="left:1897px;top:230px;width:1px;height:762px;background:#d4d4d4;"></div><div class="r" style="left:31px;top:250px;width:1869px;height:1px;background:#d4d4d4;"></div><div class="r" style="left:31px;top:271px;width:1869px;height:1px;background:#d4d4d4;"></div><div class="r" style="left:31px;top:292px;width:1869px;height:1px;background:#d4d4d4;"></div><div class="r" style="left:31px;top:313px;width:1869px;height:1px;background:#d4d4d4;"></div><div class="r" style="left:31px;top:334px;width:1869px;height:1px;background:#d4d4d4;"></div><div class="r" style="left:31px;top:355px;width:1869px;height:1px;background:#d4d4d4;"></div><div class="r" style="left:31px;top:376px;width:1869px;height:1px;background:#d4d4d4;"></div><div class="r" style="left:31px;top:397px;width:1869px;height:1px;background:#d4d4d4;"></div><div class="r" style="left:31px;top:418px;width:1869px;height:1px;background:#d4d4d4;"></div><div class="r" style="left:31px;top:439px;width:1869px;height:1px;background:#d4d4d4;"></div><div class="r" style="left:31px;top:460px;width:1869px;height:1px;background:#d4d4d4;"></div><div class="r" style="left:31px;top:481px;width:1869px;height:1px;background:#d4d4d4;"></div><div class="r" style="left:31px;top:502px;width:1869px;height:1px;background:#d4d4d4;"></div><div class="r" style="left:31px;top:523px;width:1869px;height:1px;background:#d4d4d4;"></div><div class="r" style="left:31px;top:544px;width:1869px;height:1px;background:#d4d4d4;"></div><div class="r" style="left:31px;top:565px;width:1869px;height:1px;background:#d4d4d4;"></div><div class="r" style="left:31px;top:586px;width:1869px;height:1px;background:#d4d4d4;"></div><div class="r" style="left:31px;top:607px;width:1869px;height:1px;background:#d4d4d4;"></div><div class="r" style="left:31px;top:628px;width:1869px;height:1px;background:#d4d4d4;"></div><div class="r" style="left:31px;top:649px;width:1869px;height:1px;background:#d4d4d4;"></div><div class="r" style="left:31px;top:670px;width:1869px;height:1px;background:#d4d4d4;"></div><div class="r" style="left:31px;top:691px;width:1869px;height:1px;background:#d4d4d4;"></div><div class="r" style="left:31px;top:712px;width:1869px;height:1px;background:#d4d4d4;"></div><div class="r" style="left:31px;top:733px;width:1869px;height:1px;background:#d4d4d4;"></div><div class="r" style="left:31px;top:754px;width:1869px;height:1px;background:#d4d4d4;"></div><div class="r" style="left:31px;top:775px;width:1869px;height:1px;background:#d4d4d4;"></div><div class="r" style="left:31px;top:796px;width:1869px;height:1px;background:#d4d4d4;"></div><div class="r" style="left:31px;top:817px;width:1869px;height:1px;background:#d4d4d4;"></div><div class="r" style="left:31px;top:838px;width:1869px;height:1px;background:#d4d4d4;"></div><div class="r" style="left:31px;top:859px;width:1869px;height:1px;background:#d4d4d4;"></div><div class="r" style="left:31px;top:880px;width:1869px;height:1px;background:#d4d4d4;"></div><div class="r" style="left:31px;top:901px;width:1869px;height:1px;background:#d4d4d4;"></div><div class="r" style="left:31px;top:922px;width:1869px;height:1px;background:#d4d4d4;"></div><div class="r" style="left:31px;top:943px;width:1869px;height:1px;background:#d4d4d4;"></div><div class="r" style="left:31px;top:964px;width:1869px;height:1px;background:#d4d4d4;"></div><div class="r" style="left:31px;top:985px;width:1869px;height:1px;background:#d4d4d4;"></div><div class="r" style="left:1900px;top:229px;width:1px;height:763px;background:#a8a8a8;"></div><div class="r" style="left:2px;top:229px;width:1899px;height:1px;background:#9b9b9b;"></div><div class="r" style="left:30px;top:209px;width:1px;height:783px;background:#9b9b9b;"></div><div class="r" style="left:299px;top:210px;width:1px;height:19px;background:linear-gradient(rgba(160,160,160,0.15),#a0a0a0)"></div><div class="r" style="left:417px;top:210px;width:1px;height:19px;background:linear-gradient(rgba(160,160,160,0.15),#a0a0a0)"></div><div class="r" style="left:480px;top:210px;width:1px;height:19px;background:linear-gradient(rgba(160,160,160,0.15),#a0a0a0)"></div><div class="r" style="left:543px;top:210px;width:1px;height:19px;background:linear-gradient(rgba(160,160,160,0.15),#a0a0a0)"></div><div class="r" style="left:606px;top:210px;width:1px;height:19px;background:linear-gradient(rgba(160,160,160,0.15),#a0a0a0)"></div><div class="r" style="left:661px;top:210px;width:1px;height:19px;background:linear-gradient(rgba(160,160,160,0.15),#a0a0a0)"></div><div class="r" style="left:724px;top:210px;width:1px;height:19px;background:linear-gradient(rgba(160,160,160,0.15),#a0a0a0)"></div><div class="r" style="left:787px;top:210px;width:1px;height:19px;background:linear-gradient(rgba(160,160,160,0.15),#a0a0a0)"></div><div class="r" style="left:842px;top:210px;width:1px;height:19px;background:linear-gradient(rgba(160,160,160,0.15),#a0a0a0)"></div><div class="r" style="left:905px;top:210px;width:1px;height:19px;background:linear-gradient(rgba(160,160,160,0.15),#a0a0a0)"></div><div class="r" style="left:968px;top:210px;width:1px;height:19px;background:linear-gradient(rgba(160,160,160,0.15),#a0a0a0)"></div><div class="r" style="left:1031px;top:210px;width:1px;height:19px;background:linear-gradient(rgba(160,160,160,0.15),#a0a0a0)"></div><div class="r" style="left:1094px;top:210px;width:1px;height:19px;background:linear-gradient(rgba(160,160,160,0.15),#a0a0a0)"></div><div class="r" style="left:1177px;top:210px;width:1px;height:19px;background:linear-gradient(rgba(160,160,160,0.15),#a0a0a0)"></div><div class="r" style="left:1249px;top:210px;width:1px;height:19px;background:linear-gradient(rgba(160,160,160,0.15),#a0a0a0)"></div><div class="r" style="left:1321px;top:210px;width:1px;height:19px;background:linear-gradient(rgba(160,160,160,0.15),#a0a0a0)"></div><div class="r" style="left:1393px;top:210px;width:1px;height:19px;background:linear-gradient(rgba(160,160,160,0.15),#a0a0a0)"></div><div class="r" style="left:1465px;top:210px;width:1px;height:19px;background:linear-gradient(rgba(160,160,160,0.15),#a0a0a0)"></div><div class="r" style="left:1537px;top:210px;width:1px;height:19px;background:linear-gradient(rgba(160,160,160,0.15),#a0a0a0)"></div><div class="r" style="left:1609px;top:210px;width:1px;height:19px;background:linear-gradient(rgba(160,160,160,0.15),#a0a0a0)"></div><div class="r" style="left:1681px;top:210px;width:1px;height:19px;background:linear-gradient(rgba(160,160,160,0.15),#a0a0a0)"></div><div class="r" style="left:1753px;top:210px;width:1px;height:19px;background:linear-gradient(rgba(160,160,160,0.15),#a0a0a0)"></div><div class="r" style="left:1825px;top:210px;width:1px;height:19px;background:linear-gradient(rgba(160,160,160,0.15),#a0a0a0)"></div><div class="r" style="left:1897px;top:210px;width:1px;height:19px;background:linear-gradient(rgba(160,160,160,0.15),#a0a0a0)"></div><div class="r" style="left:2px;top:250px;width:28px;height:1px;background:#c6c6c6;"></div><div class="r" style="left:2px;top:271px;width:28px;height:1px;background:#c6c6c6;"></div><div class="r" style="left:2px;top:292px;width:28px;height:1px;background:#c6c6c6;"></div><div class="r" style="left:2px;top:313px;width:28px;height:1px;background:#c6c6c6;"></div><div class="r" style="left:2px;top:334px;width:28px;height:1px;background:#c6c6c6;"></div><div class="r" style="left:2px;top:355px;width:28px;height:1px;background:#c6c6c6;"></div><div class="r" style="left:2px;top:376px;width:28px;height:1px;background:#c6c6c6;"></div><div class="r" style="left:2px;top:397px;width:28px;height:1px;background:#c6c6c6;"></div><div class="r" style="left:2px;top:418px;width:28px;height:1px;background:#c6c6c6;"></div><div class="r" style="left:2px;top:439px;width:28px;height:1px;background:#c6c6c6;"></div><div class="r" style="left:2px;top:460px;width:28px;height:1px;background:#c6c6c6;"></div><div class="r" style="left:2px;top:481px;width:28px;height:1px;background:#c6c6c6;"></div><div class="r" style="left:2px;top:502px;width:28px;height:1px;background:#c6c6c6;"></div><div class="r" style="left:2px;top:523px;width:28px;height:1px;background:#c6c6c6;"></div><div class="r" style="left:2px;top:544px;width:28px;height:1px;background:#c6c6c6;"></div><div class="r" style="left:2px;top:565px;width:28px;height:1px;background:#c6c6c6;"></div><div class="r" style="left:2px;top:586px;width:28px;height:1px;background:#c6c6c6;"></div><div class="r" style="left:2px;top:607px;width:28px;height:1px;background:#c6c6c6;"></div><div class="r" style="left:2px;top:628px;width:28px;height:1px;background:#c6c6c6;"></div><div class="r" style="left:2px;top:649px;width:28px;height:1px;background:#c6c6c6;"></div><div class="r" style="left:2px;top:670px;width:28px;height:1px;background:#c6c6c6;"></div><div class="r" style="left:2px;top:691px;width:28px;height:1px;background:#c6c6c6;"></div><div class="r" style="left:2px;top:712px;width:28px;height:1px;background:#c6c6c6;"></div><div class="r" style="left:2px;top:733px;width:28px;height:1px;background:#c6c6c6;"></div><div class="r" style="left:2px;top:754px;width:28px;height:1px;background:#c6c6c6;"></div><div class="r" style="left:2px;top:775px;width:28px;height:1px;background:#c6c6c6;"></div><div class="r" style="left:2px;top:796px;width:28px;height:1px;background:#c6c6c6;"></div><div class="r" style="left:2px;top:817px;width:28px;height:1px;background:#c6c6c6;"></div><div class="r" style="left:2px;top:838px;width:28px;height:1px;background:#c6c6c6;"></div><div class="r" style="left:2px;top:859px;width:28px;height:1px;background:#c6c6c6;"></div><div class="r" style="left:2px;top:880px;width:28px;height:1px;background:#c6c6c6;"></div><div class="r" style="left:2px;top:901px;width:28px;height:1px;background:#c6c6c6;"></div><div class="r" style="left:2px;top:922px;width:28px;height:1px;background:#c6c6c6;"></div><div class="r" style="left:2px;top:943px;width:28px;height:1px;background:#c6c6c6;"></div><div class="r" style="left:2px;top:964px;width:28px;height:1px;background:#c6c6c6;"></div><div class="r" style="left:2px;top:985px;width:28px;height:1px;background:#c6c6c6;"></div><svg class="r" style="left:14.7px;top:213.2px" width="12.3" height="12.7" viewBox="0 0 12.3 12.7"><path d="M12.3 0V12.7H0z" fill="#b4b4b4"/></svg><div class="t" style="left:160.16px;top:213.07px;font-size:14.5px;color:#222;">A</div><div class="t" style="left:353.66px;top:213.07px;font-size:14.5px;color:#222;">B</div><div class="t" style="left:443.76px;top:213.07px;font-size:14.5px;color:#222;">C</div><div class="t" style="left:506.76px;top:213.07px;font-size:14.5px;color:#222;">D</div><div class="t" style="left:570.16px;top:213.07px;font-size:14.5px;color:#222;">E</div><div class="t" style="left:629.57px;top:213.07px;font-size:14.5px;color:#222;">F</div><div class="t" style="left:687.36px;top:213.07px;font-size:14.5px;color:#222;">G</div><div class="t" style="left:750.76px;top:213.07px;font-size:14.5px;color:#222;">H</div><div class="t" style="left:812.99px;top:213.07px;font-size:14.5px;color:#222;">I</div><div class="t" style="left:870.38px;top:213.07px;font-size:14.5px;color:#222;">J</div><div class="t" style="left:932.16px;top:213.07px;font-size:14.5px;color:#222;">K</div><div class="t" style="left:995.97px;top:213.07px;font-size:14.5px;color:#222;">L</div><div class="t" style="left:1056.96px;top:213.07px;font-size:14.5px;color:#222;">M</div><div class="t" style="left:1130.76px;top:213.07px;font-size:14.5px;color:#222;">N</div><div class="t" style="left:1207.86px;top:213.07px;font-size:14.5px;color:#222;">O</div><div class="t" style="left:1280.66px;top:213.07px;font-size:14.5px;color:#222;">P</div><div class="t" style="left:1351.86px;top:213.07px;font-size:14.5px;color:#222;">Q</div><div class="t" style="left:1424.26px;top:213.07px;font-size:14.5px;color:#222;">R</div><div class="t" style="left:1496.66px;top:213.07px;font-size:14.5px;color:#222;">S</div><div class="t" style="left:1569.07px;top:213.07px;font-size:14.5px;color:#222;">T</div><div class="t" style="left:1640.26px;top:213.07px;font-size:14.5px;color:#222;">U</div><div class="t" style="left:1712.66px;top:213.07px;font-size:14.5px;color:#222;">V</div><div class="t" style="left:1782.66px;top:213.07px;font-size:14.5px;color:#222;">W</div><div class="t" style="left:1856.66px;top:213.07px;font-size:14.5px;color:#222;">X</div><div class="t" style="left:12.47px;top:233.97px;font-size:14.5px;color:#222;">1</div><div class="t" style="left:12.47px;top:254.97px;font-size:14.5px;color:#222;">2</div><div class="t" style="left:12.47px;top:275.97px;font-size:14.5px;color:#222;">3</div><div class="t" style="left:12.47px;top:296.97px;font-size:14.5px;color:#222;">4</div><div class="t" style="left:12.47px;top:317.97px;font-size:14.5px;color:#222;">5</div><div class="t" style="left:12.47px;top:338.97px;font-size:14.5px;color:#222;">6</div><div class="t" style="left:12.47px;top:359.97px;font-size:14.5px;color:#222;">7</div><div class="t" style="left:12.47px;top:380.97px;font-size:14.5px;color:#222;">8</div><div class="t" style="left:12.47px;top:401.97px;font-size:14.5px;color:#222;">9</div><div class="t" style="left:8.44px;top:422.97px;font-size:14.5px;color:#222;">10</div><div class="t" style="left:8.97px;top:443.97px;font-size:14.5px;color:#222;">11</div><div class="t" style="left:8.44px;top:464.97px;font-size:14.5px;color:#222;">12</div><div class="t" style="left:8.44px;top:485.97px;font-size:14.5px;color:#222;">13</div><div class="t" style="left:8.44px;top:506.97px;font-size:14.5px;color:#222;">14</div><div class="t" style="left:8.44px;top:527.97px;font-size:14.5px;color:#222;">15</div><div class="t" style="left:8.44px;top:548.97px;font-size:14.5px;color:#222;">16</div><div class="t" style="left:8.44px;top:569.97px;font-size:14.5px;color:#222;">17</div><div class="t" style="left:8.44px;top:590.97px;font-size:14.5px;color:#222;">18</div><div class="t" style="left:8.44px;top:611.97px;font-size:14.5px;color:#222;">19</div><div class="t" style="left:8.44px;top:632.97px;font-size:14.5px;color:#222;">20</div><div class="t" style="left:8.44px;top:653.97px;font-size:14.5px;color:#222;">21</div><div class="t" style="left:8.44px;top:674.97px;font-size:14.5px;color:#222;">22</div><div class="t" style="left:8.44px;top:695.97px;font-size:14.5px;color:#222;">23</div><div class="t" style="left:8.44px;top:716.97px;font-size:14.5px;color:#222;">24</div><div class="t" style="left:8.44px;top:737.97px;font-size:14.5px;color:#222;">25</div><div class="t" style="left:8.44px;top:758.97px;font-size:14.5px;color:#222;">26</div><div class="t" style="left:8.44px;top:779.97px;font-size:14.5px;color:#222;">27</div><div class="t" style="left:8.44px;top:800.97px;font-size:14.5px;color:#222;">28</div><div class="t" style="left:8.44px;top:821.97px;font-size:14.5px;color:#222;">29</div><div class="t" style="left:8.44px;top:842.97px;font-size:14.5px;color:#222;">30</div><div class="t" style="left:8.44px;top:863.97px;font-size:14.5px;color:#222;">31</div><div class="t" style="left:8.44px;top:884.97px;font-size:14.5px;color:#222;">32</div><div class="t" style="left:8.44px;top:905.97px;font-size:14.5px;color:#222;">33</div><div class="t" style="left:8.44px;top:926.97px;font-size:14.5px;color:#222;">34</div><div class="t" style="left:8.44px;top:947.97px;font-size:14.5px;color:#222;">35</div><div class="t" style="left:8.44px;top:968.97px;font-size:14.5px;color:#222;">36</div><div class="r" style="left:31px;top:271px;width:1146px;height:42px;background:#548235;"></div><div class="t" style="left:33.20px;top:276.00px;font-size:14px;color:#fff;font-weight:bold;transform:scaleX(0.9949);">Sum of Average Risk</div><div class="t" style="left:302.30px;top:276.00px;font-size:14px;color:#fff;">Column Labels</div><div class="t" style="left:33.20px;top:297.00px;font-size:14px;color:#fff;">Row Labels</div><div class="t" style="left:374.50px;top:297.00px;font-size:14px;color:#fff;transform:scaleX(1.0274);">43131</div><div class="t" style="left:437.50px;top:297.00px;font-size:14px;color:#fff;transform:scaleX(1.0274);">43159</div><div class="t" style="left:500.50px;top:297.00px;font-size:14px;color:#fff;transform:scaleX(1.0274);">43190</div><div class="t" style="left:563.50px;top:297.00px;font-size:14px;color:#fff;transform:scaleX(1.0274);">43220</div><div class="t" style="left:618.50px;top:297.00px;font-size:14px;color:#fff;transform:scaleX(1.0274);">43251</div><div class="t" style="left:681.50px;top:297.00px;font-size:14px;color:#fff;transform:scaleX(1.0274);">43281</div><div class="t" style="left:744.50px;top:297.00px;font-size:14px;color:#fff;transform:scaleX(1.0274);">43312</div><div class="t" style="left:799.50px;top:297.00px;font-size:14px;color:#fff;transform:scaleX(1.0274);">43343</div><div class="t" style="left:862.50px;top:297.00px;font-size:14px;color:#fff;transform:scaleX(1.0274);">43373</div><div class="t" style="left:925.50px;top:297.00px;font-size:14px;color:#fff;transform:scaleX(1.0274);">43404</div><div class="t" style="left:988.50px;top:297.00px;font-size:14px;color:#fff;transform:scaleX(1.0274);">43434</div><div class="t" style="left:1051.50px;top:297.00px;font-size:14px;color:#fff;transform:scaleX(1.0274);">43465</div><div class="t" style="left:1099.20px;top:297.00px;font-size:14px;color:#fff;transform:scaleX(1.0441);">Grand Total</div><div class="r" style="left:282px;top:295px;width:17px;height:17px;background:linear-gradient(#fbfbfd,#eceef3);border:1px solid #b9b9c8;box-sizing:border-box"></div><svg class="r" style="left:287px;top:302px" width="8" height="5" viewBox="0 0 8 5"><path d="M0 0h7.5L3.75 4.5z" fill="#555"/></svg><div class="r" style="left:400px;top:274px;width:17px;height:17px;background:linear-gradient(#fbfbfd,#eceef3);border:1px solid #b9b9c8;box-sizing:border-box"></div><svg class="r" style="left:405px;top:281px" width="8" height="5" viewBox="0 0 8 5"><path d="M0 0h7.5L3.75 4.5z" fill="#555"/></svg><div class="r" style="left:31px;top:314px;width:1146px;height:20px;background:#fff;"></div><div class="r" style="left:299px;top:314px;width:118px;height:20px;background:#8bc97d;"></div><div class="r" style="left:417px;top:314px;width:63px;height:20px;background:#8ac97d;"></div><div class="r" style="left:480px;top:314px;width:63px;height:20px;background:#89c97d;"></div><div class="r" style="left:543px;top:314px;width:63px;height:20px;background:#90cb7e;"></div><div class="r" style="left:606px;top:314px;width:55px;height:20px;background:#89c97d;"></div><div class="r" style="left:661px;top:314px;width:63px;height:20px;background:#86c87d;"></div><div class="r" style="left:724px;top:314px;width:63px;height:20px;background:#87c87d;"></div><div class="r" style="left:787px;top:314px;width:55px;height:20px;background:#83c77d;"></div><div class="r" style="left:842px;top:314px;width:63px;height:20px;background:#83c77d;"></div><div class="r" style="left:905px;top:314px;width:63px;height:20px;background:#87c87d;"></div><div class="r" style="left:968px;top:314px;width:63px;height:20px;background:#85c87d;"></div><div class="r" style="left:1031px;top:314px;width:63px;height:20px;background:#8ac97d;"></div><div class="r" style="left:31px;top:334px;width:1146px;height:1px;background:#e2efda;"></div><div class="t" style="left:33.20px;top:318.00px;font-size:14px;color:#000;transform:scaleX(1.0206);">Advertising Expenses</div><div class="t" style="left:371.10px;top:318.00px;font-size:14px;color:#000;transform:scaleX(1.0387);">0.1166</div><div class="t" style="left:434.10px;top:318.00px;font-size:14px;color:#000;transform:scaleX(1.0387);">0.1153</div><div class="t" style="left:497.10px;top:318.00px;font-size:14px;color:#000;transform:scaleX(1.0387);">0.1143</div><div class="t" style="left:560.10px;top:318.00px;font-size:14px;color:#000;transform:scaleX(1.0135);">0.1232</div><div class="t" style="left:615.10px;top:318.00px;font-size:14px;color:#000;transform:scaleX(1.0387);">0.1143</div><div class="t" style="left:678.10px;top:318.00px;font-size:14px;color:#000;transform:scaleX(1.0931);">0.1111</div><div class="t" style="left:741.10px;top:318.00px;font-size:14px;color:#000;transform:scaleX(1.0652);">0.1117</div><div class="t" style="left:796.10px;top:318.00px;font-size:14px;color:#000;transform:scaleX(1.0135);">0.1072</div><div class="t" style="left:859.10px;top:318.00px;font-size:14px;color:#000;transform:scaleX(1.0135);">0.1079</div><div class="t" style="left:922.10px;top:318.00px;font-size:14px;color:#000;transform:scaleX(1.0387);">0.1124</div><div class="t" style="left:985.10px;top:318.00px;font-size:14px;color:#000;transform:scaleX(1.0135);">0.1097</div><div class="t" style="left:1056.10px;top:318.00px;font-size:14px;color:#000;transform:scaleX(1.0413);">0.116</div><div class="t" style="left:1131.10px;top:318.00px;font-size:14px;color:#000;transform:scaleX(1.0135);">1.3597</div><div class="r" style="left:31px;top:335px;width:1146px;height:20px;background:#fff;"></div><div class="r" style="left:299px;top:335px;width:118px;height:20px;background:#ffe984;"></div><div class="r" style="left:417px;top:335px;width:63px;height:20px;background:#ffea84;"></div><div class="r" style="left:480px;top:335px;width:63px;height:20px;background:#ffea84;"></div><div class="r" style="left:543px;top:335px;width:63px;height:20px;background:#ffea84;"></div><div class="r" style="left:606px;top:335px;width:55px;height:20px;background:#ffe984;"></div><div class="r" style="left:661px;top:335px;width:63px;height:20px;background:#ffea84;"></div><div class="r" style="left:724px;top:335px;width:63px;height:20px;background:#ffea84;"></div><div class="r" style="left:787px;top:335px;width:55px;height:20px;background:#ffea84;"></div><div class="r" style="left:842px;top:335px;width:63px;height:20px;background:#ffea84;"></div><div class="r" style="left:905px;top:335px;width:63px;height:20px;background:#ffea84;"></div><div class="r" style="left:968px;top:335px;width:63px;height:20px;background:#ffeb84;"></div><div class="r" style="left:1031px;top:335px;width:63px;height:20px;background:#ffeb84;"></div><div class="r" style="left:31px;top:355px;width:1146px;height:1px;background:#e2efda;"></div><div class="t" style="left:33.20px;top:339.00px;font-size:14px;color:#000;transform:scaleX(1.0131);">Bank Loan Interest Expense</div><div class="t" style="left:371.10px;top:339.00px;font-size:14px;color:#000;transform:scaleX(1.0135);">0.2981</div><div class="t" style="left:434.10px;top:339.00px;font-size:14px;color:#000;transform:scaleX(1.0135);">0.2784</div><div class="t" style="left:497.10px;top:339.00px;font-size:14px;color:#000;transform:scaleX(1.0135);">0.2742</div><div class="t" style="left:560.10px;top:339.00px;font-size:14px;color:#000;transform:scaleX(1.0135);">0.2735</div><div class="t" style="left:615.10px;top:339.00px;font-size:14px;color:#000;transform:scaleX(1.0135);">0.3017</div><div class="t" style="left:678.10px;top:339.00px;font-size:14px;color:#000;transform:scaleX(1.0135);">0.2806</div><div class="t" style="left:741.10px;top:339.00px;font-size:14px;color:#000;transform:scaleX(1.0135);">0.2786</div><div class="t" style="left:796.10px;top:339.00px;font-size:14px;color:#000;transform:scaleX(1.0135);">0.2789</div><div class="t" style="left:859.10px;top:339.00px;font-size:14px;color:#000;transform:scaleX(1.0135);">0.2901</div><div class="t" style="left:930.10px;top:339.00px;font-size:14px;color:#000;transform:scaleX(1.0104);">0.294</div><div class="t" style="left:985.10px;top:339.00px;font-size:14px;color:#000;transform:scaleX(1.0135);">0.2607</div><div class="t" style="left:1048.10px;top:339.00px;font-size:14px;color:#000;transform:scaleX(1.0135);">0.2596</div><div class="t" style="left:1131.10px;top:339.00px;font-size:14px;color:#000;transform:scaleX(1.0135);">3.3684</div><div class="r" style="left:31px;top:356px;width:1146px;height:20px;background:#fff;"></div><div class="r" style="left:299px;top:356px;width:118px;height:20px;background:#ffe984;"></div><div class="r" style="left:417px;top:356px;width:63px;height:20px;background:#ffea84;"></div><div class="r" style="left:480px;top:356px;width:63px;height:20px;background:#ffea84;"></div><div class="r" style="left:543px;top:356px;width:63px;height:20px;background:#ffea84;"></div><div class="r" style="left:606px;top:356px;width:55px;height:20px;background:#ffe984;"></div><div class="r" style="left:661px;top:356px;width:63px;height:20px;background:#ffea84;"></div><div class="r" style="left:724px;top:356px;width:63px;height:20px;background:#ffea84;"></div><div class="r" style="left:787px;top:356px;width:55px;height:20px;background:#ffea84;"></div><div class="r" style="left:842px;top:356px;width:63px;height:20px;background:#ffea84;"></div><div class="r" style="left:905px;top:356px;width:63px;height:20px;background:#ffea84;"></div><div class="r" style="left:968px;top:356px;width:63px;height:20px;background:#ffeb84;"></div><div class="r" style="left:1031px;top:356px;width:63px;height:20px;background:#ffeb84;"></div><div class="r" style="left:31px;top:376px;width:1146px;height:1px;background:#e2efda;"></div><div class="t" style="left:33.20px;top:360.00px;font-size:14px;color:#000;transform:scaleX(1.0167);">Bank Loan Interest Payables</div><div class="t" style="left:371.10px;top:360.00px;font-size:14px;color:#000;transform:scaleX(1.0135);">0.2981</div><div class="t" style="left:434.10px;top:360.00px;font-size:14px;color:#000;transform:scaleX(1.0135);">0.2784</div><div class="t" style="left:497.10px;top:360.00px;font-size:14px;color:#000;transform:scaleX(1.0135);">0.2742</div><div class="t" style="left:560.10px;top:360.00px;font-size:14px;color:#000;transform:scaleX(1.0135);">0.2735</div><div class="t" style="left:615.10px;top:360.00px;font-size:14px;color:#000;transform:scaleX(1.0135);">0.3017</div><div class="t" style="left:678.10px;top:360.00px;font-size:14px;color:#000;transform:scaleX(1.0135);">0.2806</div><div class="t" style="left:741.10px;top:360.00px;font-size:14px;color:#000;transform:scaleX(1.0135);">0.2786</div><div class="t" style="left:796.10px;top:360.00px;font-size:14px;color:#000;transform:scaleX(1.0135);">0.2789</div><div class="t" style="left:859.10px;top:360.00px;font-size:14px;color:#000;transform:scaleX(1.0135);">0.2901</div><div class="t" style="left:930.10px;top:360.00px;font-size:14px;color:#000;transform:scaleX(1.0104);">0.294</div><div class="t" style="left:985.10px;top:360.00px;font-size:14px;color:#000;transform:scaleX(1.0135);">0.2607</div><div class="t" style="left:1048.10px;top:360.00px;font-size:14px;color:#000;transform:scaleX(1.0135);">0.2596</div><div class="t" style="left:1131.10px;top:360.00px;font-size:14px;color:#000;transform:scaleX(1.0135);">3.3684</div><div class="r" style="left:31px;top:377px;width:1146px;height:20px;background:#fff;"></div><div class="r" style="left:299px;top:377px;width:118px;height:20px;background:#e8e483;"></div><div class="r" style="left:417px;top:377px;width:63px;height:20px;background:#f2e783;"></div><div class="r" style="left:480px;top:377px;width:63px;height:20px;background:#f4e883;"></div><div class="r" style="left:543px;top:377px;width:63px;height:20px;background:#ece683;"></div><div class="r" style="left:606px;top:377px;width:55px;height:20px;background:#f3e783;"></div><div class="r" style="left:661px;top:377px;width:63px;height:20px;background:#f0e783;"></div><div class="r" style="left:724px;top:377px;width:63px;height:20px;background:#ece583;"></div><div class="r" style="left:787px;top:377px;width:55px;height:20px;background:#e7e483;"></div><div class="r" style="left:842px;top:377px;width:63px;height:20px;background:#e9e583;"></div><div class="r" style="left:905px;top:377px;width:63px;height:20px;background:#eae583;"></div><div class="r" style="left:968px;top:377px;width:63px;height:20px;background:#f1e783;"></div><div class="r" style="left:1031px;top:377px;width:63px;height:20px;background:#e8e483;"></div><div class="r" style="left:31px;top:397px;width:1146px;height:1px;background:#e2efda;"></div><div class="t" style="left:33.20px;top:381.00px;font-size:14px;color:#000;transform:scaleX(1.0257);">Bank Loan Outstanding</div><div class="t" style="left:379.10px;top:381.00px;font-size:14px;color:#000;transform:scaleX(1.0104);">0.226</div><div class="t" style="left:434.10px;top:381.00px;font-size:14px;color:#000;transform:scaleX(1.0135);">0.2383</div><div class="t" style="left:497.10px;top:381.00px;font-size:14px;color:#000;transform:scaleX(1.0135);">0.2401</div><div class="t" style="left:560.10px;top:381.00px;font-size:14px;color:#000;transform:scaleX(1.0135);">0.2315</div><div class="t" style="left:615.10px;top:381.00px;font-size:14px;color:#000;transform:scaleX(1.0135);">0.2387</div><div class="t" style="left:678.10px;top:381.00px;font-size:14px;color:#000;transform:scaleX(1.0135);">0.2361</div><div class="t" style="left:741.10px;top:381.00px;font-size:14px;color:#000;transform:scaleX(1.0135);">0.2309</div><div class="t" style="left:796.10px;top:381.00px;font-size:14px;color:#000;transform:scaleX(1.0135);">0.2254</div><div class="t" style="left:859.10px;top:381.00px;font-size:14px;color:#000;transform:scaleX(1.0135);">0.2272</div><div class="t" style="left:922.10px;top:381.00px;font-size:14px;color:#000;transform:scaleX(1.0135);">0.2288</div><div class="t" style="left:985.10px;top:381.00px;font-size:14px;color:#000;transform:scaleX(1.0135);">0.2365</div><div class="t" style="left:1056.10px;top:381.00px;font-size:14px;color:#000;transform:scaleX(1.0104);">0.226</div><div class="t" style="left:1131.10px;top:381.00px;font-size:14px;color:#000;transform:scaleX(1.0135);">2.7855</div><div class="r" style="left:31px;top:398px;width:1146px;height:20px;background:#fff;"></div><div class="r" style="left:299px;top:398px;width:118px;height:20px;background:#c5da81;"></div><div class="r" style="left:417px;top:398px;width:63px;height:20px;background:#b2d580;"></div><div class="r" style="left:480px;top:398px;width:63px;height:20px;background:#bfd880;"></div><div class="r" style="left:543px;top:398px;width:63px;height:20px;background:#c6db81;"></div><div class="r" style="left:606px;top:398px;width:55px;height:20px;background:#b5d680;"></div><div class="r" style="left:661px;top:398px;width:63px;height:20px;background:#c0d980;"></div><div class="r" style="left:724px;top:398px;width:63px;height:20px;background:#c4da81;"></div><div class="r" style="left:787px;top:398px;width:55px;height:20px;background:#bdd880;"></div><div class="r" style="left:842px;top:398px;width:63px;height:20px;background:#c0d980;"></div><div class="r" style="left:905px;top:398px;width:63px;height:20px;background:#bfd980;"></div><div class="r" style="left:968px;top:398px;width:63px;height:20px;background:#b8d780;"></div><div class="r" style="left:1031px;top:398px;width:63px;height:20px;background:#c0d980;"></div><div class="r" style="left:31px;top:418px;width:1146px;height:1px;background:#e2efda;"></div><div class="t" style="left:33.20px;top:402.00px;font-size:14px;color:#000;transform:scaleX(0.9577);">Cash</div><div class="t" style="left:371.10px;top:402.00px;font-size:14px;color:#000;transform:scaleX(1.0135);">0.1847</div><div class="t" style="left:434.10px;top:402.00px;font-size:14px;color:#000;transform:scaleX(1.0135);">0.1624</div><div class="t" style="left:497.10px;top:402.00px;font-size:14px;color:#000;transform:scaleX(1.0135);">0.1777</div><div class="t" style="left:560.10px;top:402.00px;font-size:14px;color:#000;transform:scaleX(1.0135);">0.1866</div><div class="t" style="left:615.10px;top:402.00px;font-size:14px;color:#000;transform:scaleX(1.0135);">0.1666</div><div class="t" style="left:678.10px;top:402.00px;font-size:14px;color:#000;transform:scaleX(1.0135);">0.1787</div><div class="t" style="left:741.10px;top:402.00px;font-size:14px;color:#000;transform:scaleX(1.0135);">0.1838</div><div class="t" style="left:796.10px;top:402.00px;font-size:14px;color:#000;transform:scaleX(1.0135);">0.1759</div><div class="t" style="left:859.10px;top:402.00px;font-size:14px;color:#000;transform:scaleX(1.0135);">0.1788</div><div class="t" style="left:922.10px;top:402.00px;font-size:14px;color:#000;transform:scaleX(1.0135);">0.1782</div><div class="t" style="left:1001.10px;top:402.00px;font-size:14px;color:#000;transform:scaleX(1.0056);">0.17</div><div class="t" style="left:1048.10px;top:402.00px;font-size:14px;color:#000;transform:scaleX(1.0135);">0.1792</div><div class="t" style="left:1131.10px;top:402.00px;font-size:14px;color:#000;transform:scaleX(1.0135);">2.1226</div><div class="r" style="left:31px;top:419px;width:1146px;height:20px;background:#fff;"></div><div class="r" style="left:299px;top:419px;width:118px;height:20px;background:#eae583;"></div><div class="r" style="left:417px;top:419px;width:63px;height:20px;background:#d3de81;"></div><div class="r" style="left:480px;top:419px;width:63px;height:20px;background:#d3de81;"></div><div class="r" style="left:543px;top:419px;width:63px;height:20px;background:#e5e482;"></div><div class="r" style="left:606px;top:419px;width:55px;height:20px;background:#ffea84;"></div><div class="r" style="left:661px;top:419px;width:63px;height:20px;background:#e5e482;"></div><div class="r" style="left:724px;top:419px;width:63px;height:20px;background:#e5e482;"></div><div class="r" style="left:787px;top:419px;width:55px;height:20px;background:#e5e482;"></div><div class="r" style="left:842px;top:419px;width:63px;height:20px;background:#d3de81;"></div><div class="r" style="left:905px;top:419px;width:63px;height:20px;background:#fdea84;"></div><div class="r" style="left:968px;top:419px;width:63px;height:20px;background:#d3de81;"></div><div class="r" style="left:1031px;top:419px;width:63px;height:20px;background:#e5e482;"></div><div class="r" style="left:31px;top:439px;width:1146px;height:1px;background:#e2efda;"></div><div class="t" style="left:33.20px;top:423.00px;font-size:14px;color:#000;transform:scaleX(1.0257);">Depreciation Expense</div><div class="t" style="left:371.10px;top:423.00px;font-size:14px;color:#000;transform:scaleX(1.0135);">0.2292</div><div class="t" style="left:434.10px;top:423.00px;font-size:14px;color:#000;transform:scaleX(1.0135);">0.2014</div><div class="t" style="left:497.10px;top:423.00px;font-size:14px;color:#000;transform:scaleX(1.0135);">0.2014</div><div class="t" style="left:560.10px;top:423.00px;font-size:14px;color:#000;transform:scaleX(1.0135);">0.2228</div><div class="t" style="left:615.10px;top:423.00px;font-size:14px;color:#000;transform:scaleX(1.0135);">0.2694</div><div class="t" style="left:678.10px;top:423.00px;font-size:14px;color:#000;transform:scaleX(1.0135);">0.2228</div><div class="t" style="left:741.10px;top:423.00px;font-size:14px;color:#000;transform:scaleX(1.0135);">0.2228</div><div class="t" style="left:796.10px;top:423.00px;font-size:14px;color:#000;transform:scaleX(1.0135);">0.2228</div><div class="t" style="left:859.10px;top:423.00px;font-size:14px;color:#000;transform:scaleX(1.0135);">0.2014</div><div class="t" style="left:922.10px;top:423.00px;font-size:14px;color:#000;transform:scaleX(1.0135);">0.2507</div><div class="t" style="left:985.10px;top:423.00px;font-size:14px;color:#000;transform:scaleX(1.0135);">0.2014</div><div class="t" style="left:1048.10px;top:423.00px;font-size:14px;color:#000;transform:scaleX(1.0135);">0.2228</div><div class="t" style="left:1131.10px;top:423.00px;font-size:14px;color:#000;transform:scaleX(1.0135);">2.6689</div><div class="r" style="left:31px;top:440px;width:1146px;height:20px;background:#fff;"></div><div class="r" style="left:299px;top:440px;width:118px;height:20px;background:#eae583;"></div><div class="r" style="left:417px;top:440px;width:63px;height:20px;background:#d3de81;"></div><div class="r" style="left:480px;top:440px;width:63px;height:20px;background:#d3de81;"></div><div class="r" style="left:543px;top:440px;width:63px;height:20px;background:#e5e482;"></div><div class="r" style="left:606px;top:440px;width:55px;height:20px;background:#ffea84;"></div><div class="r" style="left:661px;top:440px;width:63px;height:20px;background:#e5e482;"></div><div class="r" style="left:724px;top:440px;width:63px;height:20px;background:#e5e482;"></div><div class="r" style="left:787px;top:440px;width:55px;height:20px;background:#e5e482;"></div><div class="r" style="left:842px;top:440px;width:63px;height:20px;background:#d3de81;"></div><div class="r" style="left:905px;top:440px;width:63px;height:20px;background:#fdea84;"></div><div class="r" style="left:968px;top:440px;width:63px;height:20px;background:#d3de81;"></div><div class="r" style="left:1031px;top:440px;width:63px;height:20px;background:#e5e482;"></div><div class="r" style="left:31px;top:460px;width:1146px;height:1px;background:#e2efda;"></div><div class="t" style="left:33.20px;top:444.00px;font-size:14px;color:#000;transform:scaleX(1.0351);">Equipment Value</div><div class="t" style="left:371.10px;top:444.00px;font-size:14px;color:#000;transform:scaleX(1.0135);">0.2292</div><div class="t" style="left:434.10px;top:444.00px;font-size:14px;color:#000;transform:scaleX(1.0135);">0.2014</div><div class="t" style="left:497.10px;top:444.00px;font-size:14px;color:#000;transform:scaleX(1.0135);">0.2014</div><div class="t" style="left:560.10px;top:444.00px;font-size:14px;color:#000;transform:scaleX(1.0135);">0.2228</div><div class="t" style="left:615.10px;top:444.00px;font-size:14px;color:#000;transform:scaleX(1.0135);">0.2694</div><div class="t" style="left:678.10px;top:444.00px;font-size:14px;color:#000;transform:scaleX(1.0135);">0.2228</div><div class="t" style="left:741.10px;top:444.00px;font-size:14px;color:#000;transform:scaleX(1.0135);">0.2228</div><div class="t" style="left:796.10px;top:444.00px;font-size:14px;color:#000;transform:scaleX(1.0135);">0.2228</div><div class="t" style="left:859.10px;top:444.00px;font-size:14px;color:#000;transform:scaleX(1.0135);">0.2014</div><div class="t" style="left:922.10px;top:444.00px;font-size:14px;color:#000;transform:scaleX(1.0135);">0.2507</div><div class="t" style="left:985.10px;top:444.00px;font-size:14px;color:#000;transform:scaleX(1.0135);">0.2014</div><div class="t" style="left:1048.10px;top:444.00px;font-size:14px;color:#000;transform:scaleX(1.0135);">0.2228</div><div class="t" style="left:1131.10px;top:444.00px;font-size:14px;color:#000;transform:scaleX(1.0135);">2.6689</div><div class="r" style="left:31px;top:461px;width:1146px;height:20px;background:#fff;"></div><div class="r" style="left:299px;top:461px;width:118px;height:20px;background:#7bc57c;"></div><div class="r" style="left:417px;top:461px;width:63px;height:20px;background:#7bc57c;"></div><div class="r" style="left:480px;top:461px;width:63px;height:20px;background:#7bc57c;"></div><div class="r" style="left:543px;top:461px;width:63px;height:20px;background:#7bc57c;"></div><div class="r" style="left:606px;top:461px;width:55px;height:20px;background:#7cc57c;"></div><div class="r" style="left:661px;top:461px;width:63px;height:20px;background:#7bc57c;"></div><div class="r" style="left:724px;top:461px;width:63px;height:20px;background:#7bc57c;"></div><div class="r" style="left:787px;top:461px;width:55px;height:20px;background:#7cc57c;"></div><div class="r" style="left:842px;top:461px;width:63px;height:20px;background:#7bc57c;"></div><div class="r" style="left:905px;top:461px;width:63px;height:20px;background:#7bc57c;"></div><div class="r" style="left:968px;top:461px;width:63px;height:20px;background:#7bc57c;"></div><div class="r" style="left:1031px;top:461px;width:63px;height:20px;background:#82c77d;"></div><div class="r" style="left:31px;top:481px;width:1146px;height:1px;background:#e2efda;"></div><div class="t" style="left:33.20px;top:465.00px;font-size:14px;color:#000;transform:scaleX(0.9807);">Expenses</div><div class="t" style="left:371.10px;top:465.00px;font-size:14px;color:#000;transform:scaleX(1.0135);">0.0983</div><div class="t" style="left:434.10px;top:465.00px;font-size:14px;color:#000;transform:scaleX(1.0135);">0.0983</div><div class="t" style="left:497.10px;top:465.00px;font-size:14px;color:#000;transform:scaleX(1.0135);">0.0983</div><div class="t" style="left:560.10px;top:465.00px;font-size:14px;color:#000;transform:scaleX(1.0135);">0.0983</div><div class="t" style="left:615.10px;top:465.00px;font-size:14px;color:#000;transform:scaleX(1.0135);">0.0992</div><div class="t" style="left:678.10px;top:465.00px;font-size:14px;color:#000;transform:scaleX(1.0135);">0.0983</div><div class="t" style="left:741.10px;top:465.00px;font-size:14px;color:#000;transform:scaleX(1.0135);">0.0983</div><div class="t" style="left:796.10px;top:465.00px;font-size:14px;color:#000;transform:scaleX(1.0135);">0.0989</div><div class="t" style="left:859.10px;top:465.00px;font-size:14px;color:#000;transform:scaleX(1.0135);">0.0983</div><div class="t" style="left:922.10px;top:465.00px;font-size:14px;color:#000;transform:scaleX(1.0135);">0.0983</div><div class="t" style="left:985.10px;top:465.00px;font-size:14px;color:#000;transform:scaleX(1.0135);">0.0983</div><div class="t" style="left:1048.10px;top:465.00px;font-size:14px;color:#000;transform:scaleX(1.0135);">0.1068</div><div class="t" style="left:1131.10px;top:465.00px;font-size:14px;color:#000;transform:scaleX(1.0135);">1.1896</div><div class="r" style="left:31px;top:482px;width:1146px;height:20px;background:#fff;"></div><div class="r" style="left:299px;top:482px;width:118px;height:20px;background:#68bf7b;"></div><div class="r" style="left:417px;top:482px;width:63px;height:20px;background:#68bf7b;"></div><div class="r" style="left:480px;top:482px;width:63px;height:20px;background:#66bf7b;"></div><div class="r" style="left:543px;top:482px;width:63px;height:20px;background:#69c07b;"></div><div class="r" style="left:606px;top:482px;width:55px;height:20px;background:#65bf7b;"></div><div class="r" style="left:661px;top:482px;width:63px;height:20px;background:#65bf7b;"></div><div class="r" style="left:724px;top:482px;width:63px;height:20px;background:#65bf7b;"></div><div class="r" style="left:787px;top:482px;width:55px;height:20px;background:#65bf7b;"></div><div class="r" style="left:842px;top:482px;width:63px;height:20px;background:#67bf7b;"></div><div class="r" style="left:905px;top:482px;width:63px;height:20px;background:#63be7b;"></div><div class="r" style="left:968px;top:482px;width:63px;height:20px;background:#66bf7b;"></div><div class="r" style="left:1031px;top:482px;width:63px;height:20px;background:#69c07b;"></div><div class="r" style="left:31px;top:502px;width:1146px;height:1px;background:#e2efda;"></div><div class="t" style="left:33.20px;top:486.00px;font-size:14px;color:#000;transform:scaleX(1.0236);">Foundation Grants</div><div class="t" style="left:371.10px;top:486.00px;font-size:14px;color:#000;transform:scaleX(1.0135);">0.0752</div><div class="t" style="left:434.10px;top:486.00px;font-size:14px;color:#000;transform:scaleX(1.0135);">0.0754</div><div class="t" style="left:497.10px;top:486.00px;font-size:14px;color:#000;transform:scaleX(1.0135);">0.0739</div><div class="t" style="left:560.10px;top:486.00px;font-size:14px;color:#000;transform:scaleX(1.0135);">0.0767</div><div class="t" style="left:615.10px;top:486.00px;font-size:14px;color:#000;transform:scaleX(1.0135);">0.0725</div><div class="t" style="left:678.10px;top:486.00px;font-size:14px;color:#000;transform:scaleX(1.0135);">0.0723</div><div class="t" style="left:741.10px;top:486.00px;font-size:14px;color:#000;transform:scaleX(1.0135);">0.0724</div><div class="t" style="left:796.10px;top:486.00px;font-size:14px;color:#000;transform:scaleX(1.0135);">0.0722</div><div class="t" style="left:867.10px;top:486.00px;font-size:14px;color:#000;transform:scaleX(1.0104);">0.075</div><div class="t" style="left:922.10px;top:486.00px;font-size:14px;color:#000;transform:scaleX(1.0135);">0.0698</div><div class="t" style="left:985.10px;top:486.00px;font-size:14px;color:#000;transform:scaleX(1.0135);">0.0735</div><div class="t" style="left:1048.10px;top:486.00px;font-size:14px;color:#000;transform:scaleX(1.0135);">0.0766</div><div class="t" style="left:1131.10px;top:486.00px;font-size:14px;color:#000;transform:scaleX(1.0135);">0.8855</div><div class="r" style="left:31px;top:503px;width:1146px;height:20px;background:#fff;"></div><div class="r" style="left:299px;top:503px;width:118px;height:20px;background:#fcb479;"></div><div class="r" style="left:417px;top:503px;width:63px;height:20px;background:#fcb87a;"></div><div class="r" style="left:480px;top:503px;width:63px;height:20px;background:#fcb97a;"></div><div class="r" style="left:543px;top:503px;width:63px;height:20px;background:#fcba7a;"></div><div class="r" style="left:606px;top:503px;width:55px;height:20px;background:#fcb57a;"></div><div class="r" style="left:661px;top:503px;width:63px;height:20px;background:#fcb379;"></div><div class="r" style="left:724px;top:503px;width:63px;height:20px;background:#fcb77a;"></div><div class="r" style="left:787px;top:503px;width:55px;height:20px;background:#fcb77a;"></div><div class="r" style="left:842px;top:503px;width:63px;height:20px;background:#fcb87a;"></div><div class="r" style="left:905px;top:503px;width:63px;height:20px;background:#fcba7b;"></div><div class="r" style="left:968px;top:503px;width:63px;height:20px;background:#fcb87a;"></div><div class="r" style="left:1031px;top:503px;width:63px;height:20px;background:#fcb67a;"></div><div class="r" style="left:31px;top:523px;width:1146px;height:1px;background:#e2efda;"></div><div class="t" style="left:33.20px;top:507.00px;font-size:14px;color:#000;transform:scaleX(1.0156);">Fund Advertising Expenses</div><div class="t" style="left:371.10px;top:507.00px;font-size:14px;color:#000;transform:scaleX(1.0135);">1.8375</div><div class="t" style="left:434.10px;top:507.00px;font-size:14px;color:#000;transform:scaleX(1.0135);">1.7051</div><div class="t" style="left:497.10px;top:507.00px;font-size:14px;color:#000;transform:scaleX(1.0135);">1.6756</div><div class="t" style="left:560.10px;top:507.00px;font-size:14px;color:#000;transform:scaleX(1.0135);">1.6733</div><div class="t" style="left:615.10px;top:507.00px;font-size:14px;color:#000;transform:scaleX(1.0135);">1.8004</div><div class="t" style="left:694.10px;top:507.00px;font-size:14px;color:#000;transform:scaleX(1.0056);">1.87</div><div class="t" style="left:741.10px;top:507.00px;font-size:14px;color:#000;transform:scaleX(1.0135);">1.7576</div><div class="t" style="left:796.10px;top:507.00px;font-size:14px;color:#000;transform:scaleX(1.0135);">1.7338</div><div class="t" style="left:859.10px;top:507.00px;font-size:14px;color:#000;transform:scaleX(1.0135);">1.7032</div><div class="t" style="left:922.10px;top:507.00px;font-size:14px;color:#000;transform:scaleX(1.0135);">1.6694</div><div class="t" style="left:985.10px;top:507.00px;font-size:14px;color:#000;transform:scaleX(1.0135);">1.7158</div><div class="t" style="left:1048.10px;top:507.00px;font-size:14px;color:#000;transform:scaleX(1.0135);">1.7834</div><div class="t" style="left:1123.10px;top:507.00px;font-size:14px;color:#000;transform:scaleX(1.0157);">20.9251</div><div class="r" style="left:31px;top:524px;width:1146px;height:20px;background:#fff;"></div><div class="r" style="left:299px;top:524px;width:118px;height:20px;background:#fba276;"></div><div class="r" style="left:417px;top:524px;width:63px;height:20px;background:#fba476;"></div><div class="r" style="left:480px;top:524px;width:63px;height:20px;background:#fba476;"></div><div class="r" style="left:543px;top:524px;width:63px;height:20px;background:#fba476;"></div><div class="r" style="left:606px;top:524px;width:55px;height:20px;background:#fba476;"></div><div class="r" style="left:661px;top:524px;width:63px;height:20px;background:#fba376;"></div><div class="r" style="left:724px;top:524px;width:63px;height:20px;background:#fba476;"></div><div class="r" style="left:787px;top:524px;width:55px;height:20px;background:#fba476;"></div><div class="r" style="left:842px;top:524px;width:63px;height:20px;background:#fba476;"></div><div class="r" style="left:905px;top:524px;width:63px;height:20px;background:#fba476;"></div><div class="r" style="left:968px;top:524px;width:63px;height:20px;background:#fba576;"></div><div class="r" style="left:1031px;top:524px;width:63px;height:20px;background:#fba376;"></div><div class="r" style="left:31px;top:544px;width:1146px;height:1px;background:#e2efda;"></div><div class="t" style="left:33.20px;top:528.00px;font-size:14px;color:#000;">Fund Cash Account</div><div class="t" style="left:371.10px;top:528.00px;font-size:14px;color:#000;transform:scaleX(1.0135);">2.3575</div><div class="t" style="left:434.10px;top:528.00px;font-size:14px;color:#000;transform:scaleX(1.0135);">2.2824</div><div class="t" style="left:497.10px;top:528.00px;font-size:14px;color:#000;transform:scaleX(1.0135);">2.2916</div><div class="t" style="left:560.10px;top:528.00px;font-size:14px;color:#000;transform:scaleX(1.0135);">2.2984</div><div class="t" style="left:615.10px;top:528.00px;font-size:14px;color:#000;transform:scaleX(1.0135);">2.3056</div><div class="t" style="left:678.10px;top:528.00px;font-size:14px;color:#000;transform:scaleX(1.0135);">2.3149</div><div class="t" style="left:741.10px;top:528.00px;font-size:14px;color:#000;transform:scaleX(1.0135);">2.3003</div><div class="t" style="left:804.10px;top:528.00px;font-size:14px;color:#000;transform:scaleX(1.0104);">2.279</div><div class="t" style="left:859.10px;top:528.00px;font-size:14px;color:#000;transform:scaleX(1.0135);">2.2883</div><div class="t" style="left:922.10px;top:528.00px;font-size:14px;color:#000;transform:scaleX(1.0135);">2.2916</div><div class="t" style="left:985.10px;top:528.00px;font-size:14px;color:#000;transform:scaleX(1.0135);">2.2695</div><div class="t" style="left:1048.10px;top:528.00px;font-size:14px;color:#000;transform:scaleX(1.0135);">2.3343</div><div class="t" style="left:1123.10px;top:528.00px;font-size:14px;color:#000;transform:scaleX(1.0157);">27.6134</div><div class="r" style="left:31px;top:545px;width:1146px;height:20px;background:#fff;"></div><div class="r" style="left:299px;top:545px;width:118px;height:20px;background:#fbaa77;"></div><div class="r" style="left:417px;top:545px;width:63px;height:20px;background:#fcaa78;"></div><div class="r" style="left:480px;top:545px;width:63px;height:20px;background:#fba877;"></div><div class="r" style="left:543px;top:545px;width:63px;height:20px;background:#fba877;"></div><div class="r" style="left:606px;top:545px;width:55px;height:20px;background:#fcae78;"></div><div class="r" style="left:661px;top:545px;width:63px;height:20px;background:#fba677;"></div><div class="r" style="left:724px;top:545px;width:63px;height:20px;background:#fbaa77;"></div><div class="r" style="left:787px;top:545px;width:55px;height:20px;background:#fcab78;"></div><div class="r" style="left:842px;top:545px;width:63px;height:20px;background:#fbaa77;"></div><div class="r" style="left:905px;top:545px;width:63px;height:20px;background:#fba877;"></div><div class="r" style="left:968px;top:545px;width:63px;height:20px;background:#fcac78;"></div><div class="r" style="left:1031px;top:545px;width:63px;height:20px;background:#fba677;"></div><div class="r" style="left:31px;top:565px;width:1146px;height:1px;background:#e2efda;"></div><div class="t" style="left:33.20px;top:549.00px;font-size:14px;color:#000;transform:scaleX(1.0142);">Fund Entertainment Expenses</div><div class="t" style="left:371.10px;top:549.00px;font-size:14px;color:#000;transform:scaleX(1.0135);">2.1217</div><div class="t" style="left:434.10px;top:549.00px;font-size:14px;color:#000;transform:scaleX(1.0387);">2.1173</div><div class="t" style="left:497.10px;top:549.00px;font-size:14px;color:#000;transform:scaleX(1.0135);">2.1622</div><div class="t" style="left:560.10px;top:549.00px;font-size:14px;color:#000;transform:scaleX(1.0135);">2.1843</div><div class="t" style="left:615.10px;top:549.00px;font-size:14px;color:#000;transform:scaleX(1.0135);">2.0122</div><div class="t" style="left:678.10px;top:549.00px;font-size:14px;color:#000;transform:scaleX(1.0135);">2.2257</div><div class="t" style="left:741.10px;top:549.00px;font-size:14px;color:#000;transform:scaleX(1.0387);">2.1311</div><div class="t" style="left:796.10px;top:549.00px;font-size:14px;color:#000;transform:scaleX(1.0135);">2.1034</div><div class="t" style="left:859.10px;top:549.00px;font-size:14px;color:#000;transform:scaleX(1.0135);">2.1242</div><div class="t" style="left:922.10px;top:549.00px;font-size:14px;color:#000;transform:scaleX(1.0135);">2.1741</div><div class="t" style="left:985.10px;top:549.00px;font-size:14px;color:#000;transform:scaleX(1.0135);">2.0691</div><div class="t" style="left:1056.10px;top:549.00px;font-size:14px;color:#000;transform:scaleX(1.0104);">2.232</div><div class="t" style="left:1123.10px;top:549.00px;font-size:14px;color:#000;transform:scaleX(1.0157);">25.6573</div><div class="r" style="left:31px;top:566px;width:1146px;height:20px;background:#fff;"></div><div class="r" style="left:299px;top:566px;width:118px;height:20px;background:#fcbc7b;"></div><div class="r" style="left:417px;top:566px;width:63px;height:20px;background:#fdc07c;"></div><div class="r" style="left:480px;top:566px;width:63px;height:20px;background:#fdc17c;"></div><div class="r" style="left:543px;top:566px;width:63px;height:20px;background:#fdc17c;"></div><div class="r" style="left:606px;top:566px;width:55px;height:20px;background:#fdc17c;"></div><div class="r" style="left:661px;top:566px;width:63px;height:20px;background:#fcbc7b;"></div><div class="r" style="left:724px;top:566px;width:63px;height:20px;background:#fdc17c;"></div><div class="r" style="left:787px;top:566px;width:55px;height:20px;background:#fdc17c;"></div><div class="r" style="left:842px;top:566px;width:63px;height:20px;background:#fdc17c;"></div><div class="r" style="left:905px;top:566px;width:63px;height:20px;background:#fdc07c;"></div><div class="r" style="left:968px;top:566px;width:63px;height:20px;background:#fdc17c;"></div><div class="r" style="left:1031px;top:566px;width:63px;height:20px;background:#fdc17c;"></div><div class="r" style="left:31px;top:586px;width:1146px;height:1px;background:#e2efda;"></div><div class="t" style="left:33.20px;top:570.00px;font-size:14px;color:#000;">Fund Expense Account</div><div class="t" style="left:371.10px;top:570.00px;font-size:14px;color:#000;transform:scaleX(1.0135);">1.6155</div><div class="t" style="left:434.10px;top:570.00px;font-size:14px;color:#000;transform:scaleX(1.0135);">1.4757</div><div class="t" style="left:497.10px;top:570.00px;font-size:14px;color:#000;transform:scaleX(1.0135);">1.4702</div><div class="t" style="left:560.10px;top:570.00px;font-size:14px;color:#000;transform:scaleX(1.0135);">1.4621</div><div class="t" style="left:615.10px;top:570.00px;font-size:14px;color:#000;transform:scaleX(1.0135);">1.4657</div><div class="t" style="left:678.10px;top:570.00px;font-size:14px;color:#000;transform:scaleX(1.0135);">1.6025</div><div class="t" style="left:741.10px;top:570.00px;font-size:14px;color:#000;transform:scaleX(1.0135);">1.4627</div><div class="t" style="left:796.10px;top:570.00px;font-size:14px;color:#000;transform:scaleX(1.0135);">1.4656</div><div class="t" style="left:859.10px;top:570.00px;font-size:14px;color:#000;transform:scaleX(1.0135);">1.4468</div><div class="t" style="left:922.10px;top:570.00px;font-size:14px;color:#000;transform:scaleX(1.0135);">1.4752</div><div class="t" style="left:985.10px;top:570.00px;font-size:14px;color:#000;transform:scaleX(1.0135);">1.4707</div><div class="t" style="left:1048.10px;top:570.00px;font-size:14px;color:#000;transform:scaleX(1.0135);">1.4726</div><div class="t" style="left:1123.10px;top:570.00px;font-size:14px;color:#000;transform:scaleX(1.0157);">17.8853</div><div class="r" style="left:31px;top:587px;width:1146px;height:20px;background:#fff;"></div><div class="r" style="left:299px;top:587px;width:118px;height:20px;background:#fcbc7b;"></div><div class="r" style="left:417px;top:587px;width:63px;height:20px;background:#fdbe7b;"></div><div class="r" style="left:480px;top:587px;width:63px;height:20px;background:#fdbe7b;"></div><div class="r" style="left:543px;top:587px;width:63px;height:20px;background:#fdbe7b;"></div><div class="r" style="left:606px;top:587px;width:55px;height:20px;background:#fdbd7b;"></div><div class="r" style="left:661px;top:587px;width:63px;height:20px;background:#fcb97a;"></div><div class="r" style="left:724px;top:587px;width:63px;height:20px;background:#fdbe7b;"></div><div class="r" style="left:787px;top:587px;width:55px;height:20px;background:#fdbd7b;"></div><div class="r" style="left:842px;top:587px;width:63px;height:20px;background:#fdbe7b;"></div><div class="r" style="left:905px;top:587px;width:63px;height:20px;background:#fdbe7b;"></div><div class="r" style="left:968px;top:587px;width:63px;height:20px;background:#fdbf7c;"></div><div class="r" style="left:1031px;top:587px;width:63px;height:20px;background:#fdbe7b;"></div><div class="r" style="left:31px;top:607px;width:1146px;height:1px;background:#e2efda;"></div><div class="t" style="left:33.20px;top:591.00px;font-size:14px;color:#000;transform:scaleX(1.0299);">Fund Materials Expense Account</div><div class="t" style="left:379.10px;top:591.00px;font-size:14px;color:#000;transform:scaleX(1.0104);">1.601</div><div class="t" style="left:434.10px;top:591.00px;font-size:14px;color:#000;transform:scaleX(1.0135);">1.5399</div><div class="t" style="left:497.10px;top:591.00px;font-size:14px;color:#000;transform:scaleX(1.0135);">1.5446</div><div class="t" style="left:560.10px;top:591.00px;font-size:14px;color:#000;transform:scaleX(1.0135);">1.5466</div><div class="t" style="left:615.10px;top:591.00px;font-size:14px;color:#000;transform:scaleX(1.0135);">1.5798</div><div class="t" style="left:678.10px;top:591.00px;font-size:14px;color:#000;transform:scaleX(1.0135);">1.6936</div><div class="t" style="left:741.10px;top:591.00px;font-size:14px;color:#000;transform:scaleX(1.0135);">1.5504</div><div class="t" style="left:796.10px;top:591.00px;font-size:14px;color:#000;transform:scaleX(1.0135);">1.5664</div><div class="t" style="left:859.10px;top:591.00px;font-size:14px;color:#000;transform:scaleX(1.0135);">1.5561</div><div class="t" style="left:922.10px;top:591.00px;font-size:14px;color:#000;transform:scaleX(1.0135);">1.5367</div><div class="t" style="left:985.10px;top:591.00px;font-size:14px;color:#000;transform:scaleX(1.0135);">1.5198</div><div class="t" style="left:1048.10px;top:591.00px;font-size:14px;color:#000;transform:scaleX(1.0135);">1.5494</div><div class="t" style="left:1123.10px;top:591.00px;font-size:14px;color:#000;transform:scaleX(1.0157);">18.7843</div><div class="r" style="left:31px;top:608px;width:1146px;height:20px;background:#fff;"></div><div class="r" style="left:299px;top:608px;width:118px;height:20px;background:#f86c6c;"></div><div class="r" style="left:417px;top:608px;width:63px;height:20px;background:#f86e6c;"></div><div class="r" style="left:480px;top:608px;width:63px;height:20px;background:#f9736d;"></div><div class="r" style="left:543px;top:608px;width:63px;height:20px;background:#f86e6c;"></div><div class="r" style="left:606px;top:608px;width:55px;height:20px;background:#f86c6c;"></div><div class="r" style="left:661px;top:608px;width:63px;height:20px;background:#f86a6b;"></div><div class="r" style="left:724px;top:608px;width:63px;height:20px;background:#f86c6c;"></div><div class="r" style="left:787px;top:608px;width:55px;height:20px;background:#f8726d;"></div><div class="r" style="left:842px;top:608px;width:63px;height:20px;background:#f86a6b;"></div><div class="r" style="left:905px;top:608px;width:63px;height:20px;background:#f86a6b;"></div><div class="r" style="left:968px;top:608px;width:63px;height:20px;background:#f8696b;"></div><div class="r" style="left:1031px;top:608px;width:63px;height:20px;background:#f86b6b;"></div><div class="r" style="left:31px;top:628px;width:1146px;height:1px;background:#e2efda;"></div><div class="t" style="left:33.20px;top:612.00px;font-size:14px;color:#000;transform:scaleX(1.0159);">Fund Property Tax Expense Account</div><div class="t" style="left:371.10px;top:612.00px;font-size:14px;color:#000;transform:scaleX(1.0135);">3.9081</div><div class="t" style="left:450.10px;top:612.00px;font-size:14px;color:#000;transform:scaleX(1.0056);">3.83</div><div class="t" style="left:497.10px;top:612.00px;font-size:14px;color:#000;transform:scaleX(1.0135);">3.6953</div><div class="t" style="left:560.10px;top:612.00px;font-size:14px;color:#000;transform:scaleX(1.0387);">3.8311</div><div class="t" style="left:615.10px;top:612.00px;font-size:14px;color:#000;transform:scaleX(1.0135);">3.9089</div><div class="t" style="left:678.10px;top:612.00px;font-size:14px;color:#000;transform:scaleX(1.0135);">3.9658</div><div class="t" style="left:741.10px;top:612.00px;font-size:14px;color:#000;transform:scaleX(1.0135);">3.8874</div><div class="t" style="left:796.10px;top:612.00px;font-size:14px;color:#000;transform:scaleX(1.0135);">3.7384</div><div class="t" style="left:859.10px;top:612.00px;font-size:14px;color:#000;transform:scaleX(1.0135);">3.9698</div><div class="t" style="left:922.10px;top:612.00px;font-size:14px;color:#000;transform:scaleX(1.0135);">3.9596</div><div class="t" style="left:985.10px;top:612.00px;font-size:14px;color:#000;transform:scaleX(1.0135);">3.9847</div><div class="t" style="left:1048.10px;top:612.00px;font-size:14px;color:#000;transform:scaleX(1.0135);">3.9379</div><div class="t" style="left:1131.10px;top:612.00px;font-size:14px;color:#000;transform:scaleX(1.0135);">46.617</div><div class="r" style="left:31px;top:629px;width:1146px;height:20px;background:#fff;"></div><div class="r" style="left:299px;top:629px;width:118px;height:20px;background:#ffe483;"></div><div class="r" style="left:417px;top:629px;width:63px;height:20px;background:#ffe583;"></div><div class="r" style="left:480px;top:629px;width:63px;height:20px;background:#ffe583;"></div><div class="r" style="left:543px;top:629px;width:63px;height:20px;background:#ffe583;"></div><div class="r" style="left:606px;top:629px;width:55px;height:20px;background:#ffe683;"></div><div class="r" style="left:661px;top:629px;width:63px;height:20px;background:#ffe683;"></div><div class="r" style="left:724px;top:629px;width:63px;height:20px;background:#ffe583;"></div><div class="r" style="left:787px;top:629px;width:55px;height:20px;background:#ffe683;"></div><div class="r" style="left:842px;top:629px;width:63px;height:20px;background:#ffe583;"></div><div class="r" style="left:905px;top:629px;width:63px;height:20px;background:#ffe583;"></div><div class="r" style="left:968px;top:629px;width:63px;height:20px;background:#ffe683;"></div><div class="r" style="left:1031px;top:629px;width:63px;height:20px;background:#ffe483;"></div><div class="r" style="left:31px;top:649px;width:1146px;height:1px;background:#e2efda;"></div><div class="t" style="left:33.20px;top:633.00px;font-size:14px;color:#000;transform:scaleX(1.0264);">Government Fund Contribution</div><div class="t" style="left:371.10px;top:633.00px;font-size:14px;color:#000;transform:scaleX(1.0135);">0.4426</div><div class="t" style="left:434.10px;top:633.00px;font-size:14px;color:#000;transform:scaleX(1.0135);">0.4265</div><div class="t" style="left:497.10px;top:633.00px;font-size:14px;color:#000;transform:scaleX(1.0135);">0.4297</div><div class="t" style="left:560.10px;top:633.00px;font-size:14px;color:#000;transform:scaleX(1.0135);">0.4176</div><div class="t" style="left:615.10px;top:633.00px;font-size:14px;color:#000;transform:scaleX(1.0135);">0.3948</div><div class="t" style="left:686.10px;top:633.00px;font-size:14px;color:#000;transform:scaleX(1.0104);">0.396</div><div class="t" style="left:741.10px;top:633.00px;font-size:14px;color:#000;transform:scaleX(1.0135);">0.4178</div><div class="t" style="left:796.10px;top:633.00px;font-size:14px;color:#000;transform:scaleX(1.0135);">0.3974</div><div class="t" style="left:859.10px;top:633.00px;font-size:14px;color:#000;transform:scaleX(1.0135);">0.4232</div><div class="t" style="left:922.10px;top:633.00px;font-size:14px;color:#000;transform:scaleX(1.0135);">0.4132</div><div class="t" style="left:985.10px;top:633.00px;font-size:14px;color:#000;transform:scaleX(1.0135);">0.4074</div><div class="t" style="left:1048.10px;top:633.00px;font-size:14px;color:#000;transform:scaleX(1.0135);">0.4422</div><div class="t" style="left:1131.10px;top:633.00px;font-size:14px;color:#000;transform:scaleX(1.0135);">5.0084</div><div class="r" style="left:31px;top:650px;width:1146px;height:20px;background:#fff;"></div><div class="r" style="left:299px;top:650px;width:118px;height:20px;background:#ffeb84;"></div><div class="r" style="left:417px;top:650px;width:63px;height:20px;background:#ede683;"></div><div class="r" style="left:480px;top:650px;width:63px;height:20px;background:#ffeb84;"></div><div class="r" style="left:543px;top:650px;width:63px;height:20px;background:#ffeb84;"></div><div class="r" style="left:606px;top:650px;width:55px;height:20px;background:#ffea84;"></div><div class="r" style="left:661px;top:650px;width:63px;height:20px;background:#ede683;"></div><div class="r" style="left:724px;top:650px;width:63px;height:20px;background:#ede683;"></div><div class="r" style="left:787px;top:650px;width:55px;height:20px;background:#ede683;"></div><div class="r" style="left:842px;top:650px;width:63px;height:20px;background:#ffeb84;"></div><div class="r" style="left:905px;top:650px;width:63px;height:20px;background:#ffea84;"></div><div class="r" style="left:968px;top:650px;width:63px;height:20px;background:#ffeb84;"></div><div class="r" style="left:1031px;top:650px;width:63px;height:20px;background:#ede683;"></div><div class="r" style="left:31px;top:670px;width:1146px;height:1px;background:#e2efda;"></div><div class="t" style="left:33.20px;top:654.00px;font-size:14px;color:#000;transform:scaleX(1.0418);">Intangible Assets Amortization Expense</div><div class="t" style="left:371.10px;top:654.00px;font-size:14px;color:#000;transform:scaleX(1.0135);">0.2618</div><div class="t" style="left:442.10px;top:654.00px;font-size:14px;color:#000;transform:scaleX(1.0104);">0.232</div><div class="t" style="left:497.10px;top:654.00px;font-size:14px;color:#000;transform:scaleX(1.0135);">0.2534</div><div class="t" style="left:560.10px;top:654.00px;font-size:14px;color:#000;transform:scaleX(1.0135);">0.2534</div><div class="t" style="left:615.10px;top:654.00px;font-size:14px;color:#000;transform:scaleX(1.0135);">0.2707</div><div class="t" style="left:686.10px;top:654.00px;font-size:14px;color:#000;transform:scaleX(1.0104);">0.232</div><div class="t" style="left:749.10px;top:654.00px;font-size:14px;color:#000;transform:scaleX(1.0104);">0.232</div><div class="t" style="left:804.10px;top:654.00px;font-size:14px;color:#000;transform:scaleX(1.0104);">0.232</div><div class="t" style="left:859.10px;top:654.00px;font-size:14px;color:#000;transform:scaleX(1.0135);">0.2534</div><div class="t" style="left:922.10px;top:654.00px;font-size:14px;color:#000;transform:scaleX(1.0135);">0.2831</div><div class="t" style="left:985.10px;top:654.00px;font-size:14px;color:#000;transform:scaleX(1.0135);">0.2534</div><div class="t" style="left:1056.10px;top:654.00px;font-size:14px;color:#000;transform:scaleX(1.0104);">0.232</div><div class="t" style="left:1131.10px;top:654.00px;font-size:14px;color:#000;transform:scaleX(1.0135);">2.9892</div><div class="r" style="left:31px;top:671px;width:1146px;height:20px;background:#fff;"></div><div class="r" style="left:299px;top:671px;width:118px;height:20px;background:#ffeb84;"></div><div class="r" style="left:417px;top:671px;width:63px;height:20px;background:#ede683;"></div><div class="r" style="left:480px;top:671px;width:63px;height:20px;background:#ffeb84;"></div><div class="r" style="left:543px;top:671px;width:63px;height:20px;background:#ffeb84;"></div><div class="r" style="left:606px;top:671px;width:55px;height:20px;background:#ffea84;"></div><div class="r" style="left:661px;top:671px;width:63px;height:20px;background:#ede683;"></div><div class="r" style="left:724px;top:671px;width:63px;height:20px;background:#ede683;"></div><div class="r" style="left:787px;top:671px;width:55px;height:20px;background:#ede683;"></div><div class="r" style="left:842px;top:671px;width:63px;height:20px;background:#ffeb84;"></div><div class="r" style="left:905px;top:671px;width:63px;height:20px;background:#ffea84;"></div><div class="r" style="left:968px;top:671px;width:63px;height:20px;background:#ffeb84;"></div><div class="r" style="left:1031px;top:671px;width:63px;height:20px;background:#ede683;"></div><div class="r" style="left:31px;top:691px;width:1146px;height:1px;background:#e2efda;"></div><div class="t" style="left:33.20px;top:675.00px;font-size:14px;color:#000;transform:scaleX(1.0473);">Intangible Assets Trademark</div><div class="t" style="left:371.10px;top:675.00px;font-size:14px;color:#000;transform:scaleX(1.0135);">0.2618</div><div class="t" style="left:442.10px;top:675.00px;font-size:14px;color:#000;transform:scaleX(1.0104);">0.232</div><div class="t" style="left:497.10px;top:675.00px;font-size:14px;color:#000;transform:scaleX(1.0135);">0.2534</div><div class="t" style="left:560.10px;top:675.00px;font-size:14px;color:#000;transform:scaleX(1.0135);">0.2534</div><div class="t" style="left:615.10px;top:675.00px;font-size:14px;color:#000;transform:scaleX(1.0135);">0.2707</div><div class="t" style="left:686.10px;top:675.00px;font-size:14px;color:#000;transform:scaleX(1.0104);">0.232</div><div class="t" style="left:749.10px;top:675.00px;font-size:14px;color:#000;transform:scaleX(1.0104);">0.232</div><div class="t" style="left:804.10px;top:675.00px;font-size:14px;color:#000;transform:scaleX(1.0104);">0.232</div><div class="t" style="left:859.10px;top:675.00px;font-size:14px;color:#000;transform:scaleX(1.0135);">0.2534</div><div class="t" style="left:922.10px;top:675.00px;font-size:14px;color:#000;transform:scaleX(1.0135);">0.2831</div><div class="t" style="left:985.10px;top:675.00px;font-size:14px;color:#000;transform:scaleX(1.0135);">0.2534</div><div class="t" style="left:1056.10px;top:675.00px;font-size:14px;color:#000;transform:scaleX(1.0104);">0.232</div><div class="t" style="left:1131.10px;top:675.00px;font-size:14px;color:#000;transform:scaleX(1.0135);">2.9892</div><div class="r" style="left:31px;top:692px;width:1146px;height:20px;background:#fff;"></div><div class="r" style="left:299px;top:692px;width:118px;height:20px;background:#7dc67d;"></div><div class="r" style="left:417px;top:692px;width:63px;height:20px;background:#82c77d;"></div><div class="r" style="left:480px;top:692px;width:63px;height:20px;background:#7cc57c;"></div><div class="r" style="left:543px;top:692px;width:63px;height:20px;background:#80c77d;"></div><div class="r" style="left:606px;top:692px;width:55px;height:20px;background:#82c77d;"></div><div class="r" style="left:661px;top:692px;width:63px;height:20px;background:#84c77d;"></div><div class="r" style="left:724px;top:692px;width:63px;height:20px;background:#7bc57c;"></div><div class="r" style="left:787px;top:692px;width:55px;height:20px;background:#82c77d;"></div><div class="r" style="left:842px;top:692px;width:63px;height:20px;background:#7ec67d;"></div><div class="r" style="left:905px;top:692px;width:63px;height:20px;background:#7fc67d;"></div><div class="r" style="left:968px;top:692px;width:63px;height:20px;background:#84c87d;"></div><div class="r" style="left:1031px;top:692px;width:63px;height:20px;background:#7cc57c;"></div><div class="r" style="left:31px;top:712px;width:1146px;height:1px;background:#e2efda;"></div><div class="t" style="left:33.20px;top:696.00px;font-size:14px;color:#000;transform:scaleX(1.0498);">Meals and Entertainment</div><div class="t" style="left:371.10px;top:696.00px;font-size:14px;color:#000;transform:scaleX(1.0135);">0.1006</div><div class="t" style="left:434.10px;top:696.00px;font-size:14px;color:#000;transform:scaleX(1.0135);">0.1064</div><div class="t" style="left:497.10px;top:696.00px;font-size:14px;color:#000;transform:scaleX(1.0135);">0.0989</div><div class="t" style="left:560.10px;top:696.00px;font-size:14px;color:#000;transform:scaleX(1.0135);">0.1045</div><div class="t" style="left:615.10px;top:696.00px;font-size:14px;color:#000;transform:scaleX(1.0135);">0.1065</div><div class="t" style="left:678.10px;top:696.00px;font-size:14px;color:#000;transform:scaleX(1.0135);">0.1085</div><div class="t" style="left:741.10px;top:696.00px;font-size:14px;color:#000;transform:scaleX(1.0135);">0.0977</div><div class="t" style="left:804.10px;top:696.00px;font-size:14px;color:#000;transform:scaleX(1.0104);">0.106</div><div class="t" style="left:859.10px;top:696.00px;font-size:14px;color:#000;transform:scaleX(1.0135);">0.1014</div><div class="t" style="left:922.10px;top:696.00px;font-size:14px;color:#000;transform:scaleX(1.0135);">0.1027</div><div class="t" style="left:985.10px;top:696.00px;font-size:14px;color:#000;transform:scaleX(1.0135);">0.1091</div><div class="t" style="left:1056.10px;top:696.00px;font-size:14px;color:#000;transform:scaleX(1.0104);">0.099</div><div class="t" style="left:1131.10px;top:696.00px;font-size:14px;color:#000;transform:scaleX(1.0135);">1.2413</div><div class="r" style="left:31px;top:713px;width:1146px;height:20px;background:#fff;"></div><div class="r" style="left:299px;top:713px;width:118px;height:20px;background:#fdce7f;"></div><div class="r" style="left:417px;top:713px;width:63px;height:20px;background:#fed07f;"></div><div class="r" style="left:480px;top:713px;width:63px;height:20px;background:#fed07f;"></div><div class="r" style="left:543px;top:713px;width:63px;height:20px;background:#fecf7f;"></div><div class="r" style="left:606px;top:713px;width:55px;height:20px;background:#fed07f;"></div><div class="r" style="left:661px;top:713px;width:63px;height:20px;background:#fdcf7f;"></div><div class="r" style="left:724px;top:713px;width:63px;height:20px;background:#fed07f;"></div><div class="r" style="left:787px;top:713px;width:55px;height:20px;background:#fdcf7f;"></div><div class="r" style="left:842px;top:713px;width:63px;height:20px;background:#fed07f;"></div><div class="r" style="left:905px;top:713px;width:63px;height:20px;background:#fed07f;"></div><div class="r" style="left:968px;top:713px;width:63px;height:20px;background:#fed07f;"></div><div class="r" style="left:1031px;top:713px;width:63px;height:20px;background:#fdce7e;"></div><div class="r" style="left:31px;top:733px;width:1146px;height:1px;background:#e2efda;"></div><div class="t" style="left:33.20px;top:717.00px;font-size:14px;color:#000;transform:scaleX(1.0293);">Private Fund Contribution</div><div class="t" style="left:371.10px;top:717.00px;font-size:14px;color:#000;transform:scaleX(1.0135);">1.0727</div><div class="t" style="left:434.10px;top:717.00px;font-size:14px;color:#000;transform:scaleX(1.0135);">1.0405</div><div class="t" style="left:505.10px;top:717.00px;font-size:14px;color:#000;transform:scaleX(1.0104);">1.017</div><div class="t" style="left:560.10px;top:717.00px;font-size:14px;color:#000;transform:scaleX(1.0135);">1.0489</div><div class="t" style="left:615.10px;top:717.00px;font-size:14px;color:#000;transform:scaleX(1.0135);">1.0399</div><div class="t" style="left:678.10px;top:717.00px;font-size:14px;color:#000;transform:scaleX(1.0135);">1.0546</div><div class="t" style="left:741.10px;top:717.00px;font-size:14px;color:#000;transform:scaleX(1.0135);">1.0376</div><div class="t" style="left:796.10px;top:717.00px;font-size:14px;color:#000;transform:scaleX(1.0135);">1.0556</div><div class="t" style="left:875.10px;top:717.00px;font-size:14px;color:#000;transform:scaleX(1.0056);">1.04</div><div class="t" style="left:922.10px;top:717.00px;font-size:14px;color:#000;transform:scaleX(1.0135);">1.0393</div><div class="t" style="left:985.10px;top:717.00px;font-size:14px;color:#000;transform:scaleX(1.0135);">1.0375</div><div class="t" style="left:1048.10px;top:717.00px;font-size:14px;color:#000;transform:scaleX(1.0135);">1.0933</div><div class="t" style="left:1123.10px;top:717.00px;font-size:14px;color:#000;transform:scaleX(1.0157);">12.5769</div><div class="r" style="left:31px;top:734px;width:1146px;height:20px;background:#fff;"></div><div class="r" style="left:299px;top:734px;width:118px;height:20px;background:#b8d680;"></div><div class="r" style="left:417px;top:734px;width:63px;height:20px;background:#b2d580;"></div><div class="r" style="left:480px;top:734px;width:63px;height:20px;background:#acd37f;"></div><div class="r" style="left:543px;top:734px;width:63px;height:20px;background:#b0d47f;"></div><div class="r" style="left:606px;top:734px;width:55px;height:20px;background:#b3d580;"></div><div class="r" style="left:661px;top:734px;width:63px;height:20px;background:#c9db81;"></div><div class="r" style="left:724px;top:734px;width:63px;height:20px;background:#bcd880;"></div><div class="r" style="left:787px;top:734px;width:55px;height:20px;background:#b3d580;"></div><div class="r" style="left:842px;top:734px;width:63px;height:20px;background:#b2d580;"></div><div class="r" style="left:905px;top:734px;width:63px;height:20px;background:#aad27f;"></div><div class="r" style="left:968px;top:734px;width:63px;height:20px;background:#aad37f;"></div><div class="r" style="left:1031px;top:734px;width:63px;height:20px;background:#aed37f;"></div><div class="r" style="left:31px;top:754px;width:1146px;height:1px;background:#e2efda;"></div><div class="t" style="left:33.20px;top:738.00px;font-size:14px;color:#000;transform:scaleX(1.0441);">Site rental and related costs</div><div class="t" style="left:371.10px;top:738.00px;font-size:14px;color:#000;transform:scaleX(1.0135);">0.1694</div><div class="t" style="left:434.10px;top:738.00px;font-size:14px;color:#000;transform:scaleX(1.0135);">0.1623</div><div class="t" style="left:497.10px;top:738.00px;font-size:14px;color:#000;transform:scaleX(1.0135);">0.1561</div><div class="t" style="left:560.10px;top:738.00px;font-size:14px;color:#000;transform:scaleX(1.0135);">0.1607</div><div class="t" style="left:615.10px;top:738.00px;font-size:14px;color:#000;transform:scaleX(1.0135);">0.1635</div><div class="t" style="left:678.10px;top:738.00px;font-size:14px;color:#000;transform:scaleX(1.0135);">0.1894</div><div class="t" style="left:741.10px;top:738.00px;font-size:14px;color:#000;transform:scaleX(1.0135);">0.1748</div><div class="t" style="left:796.10px;top:738.00px;font-size:14px;color:#000;transform:scaleX(1.0135);">0.1634</div><div class="t" style="left:867.10px;top:738.00px;font-size:14px;color:#000;transform:scaleX(1.0104);">0.163</div><div class="t" style="left:922.10px;top:738.00px;font-size:14px;color:#000;transform:scaleX(1.0135);">0.1534</div><div class="t" style="left:985.10px;top:738.00px;font-size:14px;color:#000;transform:scaleX(1.0135);">0.1535</div><div class="t" style="left:1048.10px;top:738.00px;font-size:14px;color:#000;transform:scaleX(1.0135);">0.1575</div><div class="t" style="left:1139.10px;top:738.00px;font-size:14px;color:#000;transform:scaleX(1.0104);">1.967</div><div class="r" style="left:31px;top:755px;width:1146px;height:20px;background:#fff;"></div><div class="r" style="left:299px;top:755px;width:118px;height:20px;background:#f5e883;"></div><div class="r" style="left:417px;top:755px;width:63px;height:20px;background:#f6e883;"></div><div class="r" style="left:480px;top:755px;width:63px;height:20px;background:#f5e883;"></div><div class="r" style="left:543px;top:755px;width:63px;height:20px;background:#f8e984;"></div><div class="r" style="left:606px;top:755px;width:55px;height:20px;background:#f9e984;"></div><div class="r" style="left:661px;top:755px;width:63px;height:20px;background:#f9e984;"></div><div class="r" style="left:724px;top:755px;width:63px;height:20px;background:#f4e883;"></div><div class="r" style="left:787px;top:755px;width:55px;height:20px;background:#f8e984;"></div><div class="r" style="left:842px;top:755px;width:63px;height:20px;background:#f7e984;"></div><div class="r" style="left:905px;top:755px;width:63px;height:20px;background:#f5e883;"></div><div class="r" style="left:968px;top:755px;width:63px;height:20px;background:#f8e984;"></div><div class="r" style="left:1031px;top:755px;width:63px;height:20px;background:#f9e984;"></div><div class="r" style="left:31px;top:775px;width:1146px;height:1px;background:#e2efda;"></div><div class="t" style="left:33.20px;top:759.00px;font-size:14px;color:#000;transform:scaleX(1.0136);">Tax Payables</div><div class="t" style="left:371.10px;top:759.00px;font-size:14px;color:#000;transform:scaleX(1.0135);">0.2413</div><div class="t" style="left:434.10px;top:759.00px;font-size:14px;color:#000;transform:scaleX(1.0135);">0.2425</div><div class="t" style="left:497.10px;top:759.00px;font-size:14px;color:#000;transform:scaleX(1.0387);">0.2411</div><div class="t" style="left:568.10px;top:759.00px;font-size:14px;color:#000;transform:scaleX(1.0104);">0.245</div><div class="t" style="left:615.10px;top:759.00px;font-size:14px;color:#000;transform:scaleX(1.0135);">0.2468</div><div class="t" style="left:678.10px;top:759.00px;font-size:14px;color:#000;transform:scaleX(1.0135);">0.2464</div><div class="t" style="left:741.10px;top:759.00px;font-size:14px;color:#000;transform:scaleX(1.0135);">0.2409</div><div class="t" style="left:804.10px;top:759.00px;font-size:14px;color:#000;transform:scaleX(1.0104);">0.245</div><div class="t" style="left:859.10px;top:759.00px;font-size:14px;color:#000;transform:scaleX(1.0135);">0.2443</div><div class="t" style="left:922.10px;top:759.00px;font-size:14px;color:#000;transform:scaleX(1.0135);">0.2415</div><div class="t" style="left:985.10px;top:759.00px;font-size:14px;color:#000;transform:scaleX(1.0135);">0.2457</div><div class="t" style="left:1048.10px;top:759.00px;font-size:14px;color:#000;transform:scaleX(1.0135);">0.2461</div><div class="t" style="left:1131.10px;top:759.00px;font-size:14px;color:#000;transform:scaleX(1.0135);">2.9266</div><div class="r" style="left:31px;top:313px;width:1146px;height:1px;background:#c6e0b4;"></div><div class="r" style="left:31px;top:775px;width:1146px;height:21px;background:#fff;"></div><div class="r" style="left:31px;top:774px;width:1146px;height:1px;background:#548235;"></div><div class="r" style="left:31px;top:776px;width:1146px;height:1px;background:#548235;"></div><div class="t" style="left:33.20px;top:780.00px;font-size:14px;color:#000;font-weight:bold;transform:scaleX(1.0371);">Grand Total</div><div class="t" style="left:363.10px;top:780.00px;font-size:14px;color:#000;font-weight:bold;transform:scaleX(1.0157);">17.7469</div><div class="t" style="left:426.10px;top:780.00px;font-size:14px;color:#000;font-weight:bold;transform:scaleX(1.0157);">17.0419</div><div class="t" style="left:489.10px;top:780.00px;font-size:14px;color:#000;font-weight:bold;transform:scaleX(1.0157);">16.9446</div><div class="t" style="left:552.10px;top:780.00px;font-size:14px;color:#000;font-weight:bold;transform:scaleX(1.0157);">17.1882</div><div class="t" style="left:615.10px;top:780.00px;font-size:14px;color:#000;font-weight:bold;transform:scaleX(1.0135);">17.399</div><div class="t" style="left:670.10px;top:780.00px;font-size:14px;color:#000;font-weight:bold;transform:scaleX(1.0157);">17.8347</div><div class="t" style="left:733.10px;top:780.00px;font-size:14px;color:#000;font-weight:bold;transform:scaleX(1.0157);">17.2222</div><div class="t" style="left:796.10px;top:780.00px;font-size:14px;color:#000;font-weight:bold;transform:scaleX(1.0135);">17.001</div><div class="t" style="left:851.10px;top:780.00px;font-size:14px;color:#000;font-weight:bold;transform:scaleX(1.0157);">17.2373</div><div class="t" style="left:914.10px;top:780.00px;font-size:14px;color:#000;font-weight:bold;transform:scaleX(1.0157);">17.3998</div><div class="t" style="left:977.10px;top:780.00px;font-size:14px;color:#000;font-weight:bold;transform:scaleX(1.0157);">17.1018</div><div class="t" style="left:1040.10px;top:780.00px;font-size:14px;color:#000;font-weight:bold;transform:scaleX(1.0314);">17.4811</div><div class="t" style="left:1115.10px;top:780.00px;font-size:14px;color:#000;font-weight:bold;transform:scaleX(1.0172);">207.5985</div><div class="r" style="left:1177px;top:271px;width:1px;height:525px;background:#d4d4d4;"></div><div class="r" style="left:1901px;top:209px;width:21px;height:784px;background:#e6e6e6;"></div><div class="r" style="left:1904px;top:211px;width:15px;height:15px;background:#fff;border:1px solid #b0b0b0;box-sizing:border-box"></div><svg class="r" style="left:1908px;top:216px" width="7.4" height="4" viewBox="0 0 7.4 4"><path d="M0 4h7.4L3.7 0z" fill="#666"/></svg><div class="r" style="left:1904px;top:226px;width:15px;height:731px;background:#fff;border:1px solid #b0b0b0;box-sizing:border-box"></div><div class="r" style="left:1904px;top:957px;width:15px;height:21px;background:#dadada;"></div><div class="r" style="left:1904px;top:978px;width:15px;height:15px;background:#fff;border:1px solid #b0b0b0;box-sizing:border-box"></div><svg class="r" style="left:1908px;top:984px" width="7.4" height="4" viewBox="0 0 7.4 4"><path d="M0 0h7.4L3.7 4z" fill="#666"/></svg><div class="r" style="left:2px;top:992px;width:1899px;height:1px;background:#9b9b9b;"></div><div class="r" style="left:2px;top:993px;width:1920px;height:27px;background:#e6e6e6;"></div><div class="r" style="left:2px;top:1020px;width:1920px;height:1px;background:#c8c8c8;"></div><svg class="r" style="left:29px;top:1001px" width="6" height="9" viewBox="0 0 6 9"><path d="M5 0v9L0 4.5z" fill="#b8b8b8"/></svg><svg class="r" style="left:57px;top:1001px" width="6" height="9" viewBox="0 0 6 9"><path d="M0 0v9L5 4.5z" fill="#b8b8b8"/></svg><div class="r" style="left:102px;top:996px;width:1px;height:22px;background:#a8a8a8;"></div><div class="t" style="left:114.30px;top:998.36px;font-size:13px;color:#333;transform:scaleX(0.9781);">Year-1</div><div class="r" style="left:165px;top:996px;width:1px;height:22px;background:#a8a8a8;"></div><div class="t" style="left:177.30px;top:998.36px;font-size:13px;color:#333;transform:scaleX(0.9781);">Year-2</div><div class="r" style="left:228px;top:996px;width:1px;height:22px;background:#a8a8a8;"></div><div class="t" style="left:240.30px;top:998.36px;font-size:13px;color:#333;transform:scaleX(0.9781);">Year-3</div><div class="r" style="left:291px;top:996px;width:1px;height:22px;background:#a8a8a8;"></div><div class="t" style="left:303.30px;top:998.36px;font-size:13px;color:#333;transform:scaleX(0.9781);">Year-4</div><div class="r" style="left:354px;top:996px;width:1px;height:22px;background:#a8a8a8;"></div><div class="t" style="left:366.30px;top:998.36px;font-size:13px;color:#333;transform:scaleX(0.9781);">Year-5</div><div class="r" style="left:417px;top:992px;width:65px;height:25px;background:#fff;"></div><div class="r" style="left:417px;top:992px;width:1px;height:25px;background:#c8c8c8;"></div><div class="r" style="left:482px;top:992px;width:1px;height:25px;background:#c8c8c8;"></div><div class="r" style="left:417px;top:1015px;width:66px;height:2.2px;background:#1e6b3f;"></div><div class="t" style="left:429.70px;top:998.36px;font-size:13px;color:#1d6a3c;font-weight:bold;transform:scaleX(0.9523);">Sheet2</div><div class="t" style="left:496.00px;top:998.86px;font-size:13px;color:#333;transform:scaleX(0.8980);">Sheet1</div><div class="r" style="left:546px;top:996px;width:1px;height:22px;background:#a8a8a8;"></div><svg class="r" style="left:579px;top:997px" width="18" height="18" viewBox="0 0 18 18" fill="none" stroke="#666" stroke-width="1.1"><circle cx="9" cy="9" r="7.5"/><path d="M9 4.5v9M4.5 9h9"/></svg><div class="r" style="left:964px;top:1001px;width:2px;height:2px;background:#999;"></div><div class="r" style="left:964px;top:1005px;width:2px;height:2px;background:#999;"></div><div class="r" style="left:964px;top:1009px;width:2px;height:2px;background:#999;"></div><div class="r" style="left:981px;top:999px;width:15px;height:15px;background:#fff;border:1px solid #b0b0b0;box-sizing:border-box"></div><svg class="r" style="left:986px;top:1002px" width="5" height="9" viewBox="0 0 5 9"><path d="M5 0v9L0 4.5z" fill="#666"/></svg><div class="r" style="left:995px;top:999px;width:852px;height:15px;background:#fff;border:1px solid #b0b0b0;box-sizing:border-box"></div><div class="r" style="left:1847px;top:999px;width:39px;height:15px;background:#dadada;"></div><div class="r" style="left:1886px;top:999px;width:15px;height:15px;background:#fff;border:1px solid #b0b0b0;box-sizing:border-box"></div><svg class="r" style="left:1892px;top:1002px" width="5" height="9" viewBox="0 0 5 9"><path d="M0 0v9L5 4.5z" fill="#666"/></svg><div class="r" style="left:2px;top:1021px;width:1920px;height:21px;background:#f3f2f1;"></div><div class="r" style="left:1622px;top:1021px;width:40px;height:21px;background:#c8c6c4;"></div><svg class="r" style="left:1634px;top:1024px" width="15" height="15" viewBox="0 0 15 15" fill="none" stroke="#333" stroke-width="1.1"><rect x="1" y="1" width="12.5" height="12.5"/><path d="M5.2 1v12.5M9.3 1v12.5M1 5.2h12.5M1 9.3h12.5"/></svg><svg class="r" style="left:1675px;top:1024px" width="15" height="15" viewBox="0 0 15 15" fill="none" stroke="#444" stroke-width="1.1"><rect x="1" y="1" width="12.5" height="12.5"/><rect x="4" y="3.5" width="6.5" height="7.5"/><path d="M5.5 5.5h3.5M5.5 7.3h3.5M5.5 9h3.5"/></svg><svg class="r" style="left:1715px;top:1024px" width="15" height="15" viewBox="0 0 15 15" fill="none" stroke="#444" stroke-width="1.1"><rect x="1" y="1" width="12.5" height="12.5"/><path d="M4.5 1v5h5V1M7 1v5"/></svg><div class="r" style="left:1748px;top:1030px;width:8px;height:1.3px;background:#444;"></div><div class="r" style="left:1761px;top:1030.5px;width:100px;height:1px;background:#b8b8b8;"></div><div class="r" style="left:1808.8px;top:1025px;width:5px;height:11px;background:#7a7a7a;"></div><div class="r" style="left:1866px;top:1030px;width:8px;height:1.3px;background:#444;"></div><div class="r" style="left:1869.4px;top:1026.6px;width:1.3px;height:8px;background:#444;"></div><div class="t" style="left:1887.00px;top:1025.14px;font-size:11.5px;color:#444;transform:scaleX(0.9180);">100%</div>
</body></html>
